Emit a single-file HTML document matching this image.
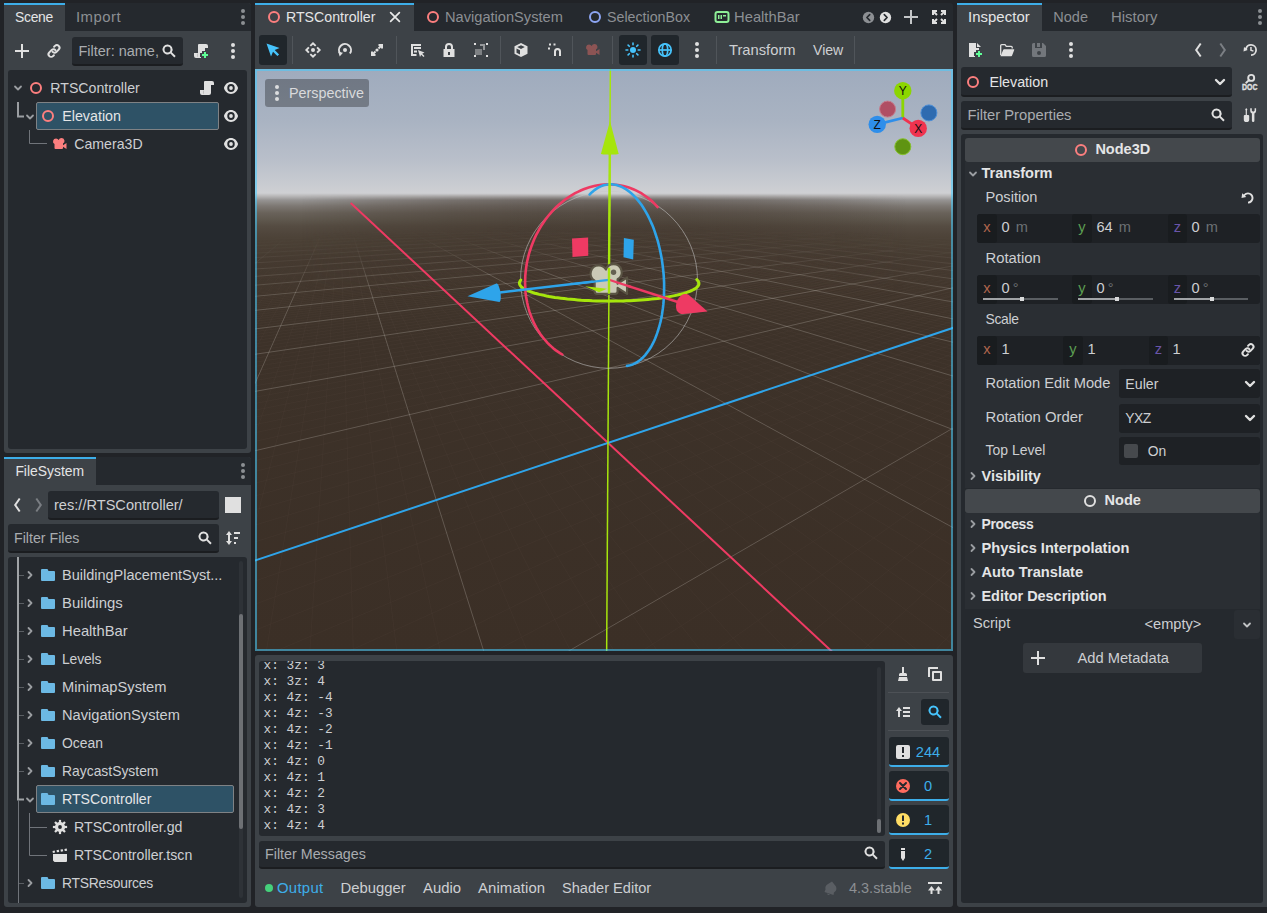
<!DOCTYPE html>
<html><head><meta charset="utf-8"><title>Godot</title>
<style>
:root{--bg:#212327;--base:#3d4247;--d1:#25292e;--d2:#1d2023;--d3:#181a1c;--fg:#cdcfd2;--fgb:#e4e5e6;--dim:#8c8f93;--acc:#3daee9;--sel:#2e5266;--ico:#e0e0e0}
*{box-sizing:border-box;margin:0;padding:0}
html,body{width:1267px;height:913px;overflow:hidden;background:var(--bg)}
body{font-family:"Liberation Sans",sans-serif;font-size:14.6px;color:var(--fg);position:relative}
.a{position:absolute}
.t{position:absolute;white-space:nowrap;line-height:20px;height:20px}
.dock{position:absolute;background:var(--base);border-radius:3px}
.tabbar{position:absolute;left:0;top:0;right:0;height:28px;background:var(--d1);border-radius:3px 3px 0 0}
.tab{position:absolute;top:0;height:28px;background:var(--base);border-top:2px solid var(--acc);color:var(--fgb)}
.dim{color:var(--dim)}
.field{position:absolute;background:var(--d1);border-radius:3px;border-bottom:2px solid #1b1d20}
.tree{position:absolute;background:var(--d1);border-radius:3px}
.selrow{position:absolute;background:var(--sel);border:1px solid #7f8285;border-radius:2px}
svg{position:absolute;overflow:visible}
.ic{width:16px;height:16px}
.b{font-weight:bold;color:var(--fgb)}
.sep{position:absolute;width:1px;background:#50555a}
.btnon{position:absolute;background:#20262b;border-radius:3px}
.mono{font-family:"Liberation Mono",monospace}
</style></head><body>
<div class="dock" style="left:4px;top:3px;width:247px;height:449.5px;"></div>
<div class="a" style="left:4px;top:3px;width:247px;height:28px;background:var(--d1);border-radius:3px 3px 0 0"></div>
<div class="tab" style="left:4px;top:3px;width:61px;height:28px;"></div>
<div class="t " style="left:15px;top:7.00px;font-size:13.90px;letter-spacing:-0.282px;color:var(--fgb)">Scene</div>
<div class="t dim" style="left:76px;top:7.00px;font-size:14.90px;letter-spacing:0.480px;">Import</div>
<svg class="ic" style="left:235.0px;top:9.0px;width:16px;height:16px" viewBox="0 0 16 16"><circle cx="8" cy="2" r="2" fill="#8c8f93"/><circle cx="8" cy="8" r="2" fill="#8c8f93"/><circle cx="8" cy="14" r="2" fill="#8c8f93"/></svg>
<svg class="ic" style="left:14.0px;top:43.0px;width:16px;height:16px" viewBox="0 0 16 16"><path d="M7 1v6H1v2h6v6h2V9h6V7H9V1z" fill="#e0e0e0"/></svg>
<svg class="ic" style="left:46.0px;top:43.0px;width:16px;height:16px" viewBox="0 0 16 16"><g fill="none" stroke="#e0e0e0" stroke-width="2" stroke-linecap="round"><path d="M6.6 8.9a2.6 2.6 0 0 0 3.7.1l2.4-2.4a2.6 2.6 0 0 0-3.7-3.7l-.9.9"/><path d="M9.4 7.1a2.6 2.6 0 0 0-3.7-.1l-2.4 2.4a2.6 2.6 0 0 0 3.7 3.7l.9-.9"/></g></svg>
<div class="field" style="left:72px;top:37px;width:111px;height:28.5px;"></div>
<div class="t " style="left:78.5px;top:41.00px;font-size:14.47px;letter-spacing:0.000px;color:#a9acb0">Filter: name,</div>
<svg class="ic" style="left:160.5px;top:43.0px;width:16px;height:16px" viewBox="0 0 16 16"><path d="M6.5 1.5a5 5 0 1 0 2.9 9.1l3.9 3.9 1.4-1.4-3.9-3.9A5 5 0 0 0 6.5 1.5zm0 2a3 3 0 0 1 0 6 3 3 0 0 1 0-6z" fill="#e0e0e0"/></svg>
<svg class="ic" style="left:193.0px;top:43.0px;width:16px;height:16px" viewBox="0 0 16 16"><path d="M6 1a1 1 0 0 0-1 1v8H1v3a2 2 0 0 0 2 2h5v-1H7v-4h2V8h3V5h3V3a2 2 0 0 0-2-2z" fill="#e0e0e0"/><path d="M4 10.500h.800V13a1.800 1.800 0 0 1-.800 1.500z" fill="#000" fill-opacity=".18"/><path d="M13 13h2v-2h-2V9h-2v2H9v2h2v2h2z" fill="#5fff97"/></svg>
<svg class="ic" style="left:225.0px;top:43.0px;width:16px;height:16px" viewBox="0 0 16 16"><circle cx="8" cy="2" r="2" fill="#e0e0e0"/><circle cx="8" cy="8" r="2" fill="#e0e0e0"/><circle cx="8" cy="14" r="2" fill="#e0e0e0"/></svg>
<div class="tree" style="left:8px;top:70px;width:239px;height:379px;"></div>
<svg class="ic" style="left:12.0px;top:82.0px;width:12px;height:12px" viewBox="0 0 16 16"><path d="M4 6l4 4 4-4" fill="none" stroke="#9a9da1" stroke-width="2.400" stroke-linecap="round" stroke-linejoin="round"/></svg>
<svg class="ic" style="left:28.0px;top:80.0px;width:16px;height:16px" viewBox="0 0 16 16"><circle cx="8" cy="8" r="5" fill="none" stroke="#fc7f7f" stroke-width="2"/></svg>
<div class="t " style="left:50.3px;top:78.00px;font-size:14.17px;letter-spacing:0.000px;">RTSController</div>
<svg class="ic" style="left:199.0px;top:80.0px;width:16px;height:16px" viewBox="0 0 16 16"><path d="M6 1a1 1 0 0 0-1 1v8H1v3a2 2 0 0 0 2 2h7a2 2 0 0 0 2-2V5h3V3a2 2 0 0 0-2-2z" fill="#e0e0e0"/><path d="M4 10.500h.800V13a1.800 1.800 0 0 1-.800 1.500z" fill="#000" fill-opacity=".18"/></svg>
<svg class="ic" style="left:223.0px;top:80.0px;width:16px;height:16px" viewBox="0 0 16 16"><path d="M8 2C4.443 2 1.53 4.42.5 7.7a1 1 0 0 0 0 .6C1.53 11.58 4.443 14 8 14s6.47-2.42 7.5-5.7a1 1 0 0 0 0-.6C14.47 4.42 11.557 2 8 2zm0 2a4 4 0 0 1 0 8 4 4 0 0 1 0-8zm0 2a2 2 0 0 0 0 4 2 2 0 0 0 0-4z" fill="#e0e0e0" transform="translate(8 8) scale(.930 1) translate(-8 -8)"/></svg>
<div class="selrow" style="left:36px;top:102px;width:183px;height:28px;"></div>
<svg style="left:0;top:0;width:260px;height:200px" viewBox="0 0 260 200"><path d="M18 102V116.500H24" fill="none" stroke="#9a9da1" stroke-width="2"/><path d="M29.5 130V143.5H47" fill="none" stroke="#70747a" stroke-width="1"/></svg>
<svg class="ic" style="left:24.0px;top:111.0px;width:12px;height:12px" viewBox="0 0 16 16"><path d="M4 6l4 4 4-4" fill="none" stroke="#9a9da1" stroke-width="2.400" stroke-linecap="round" stroke-linejoin="round"/></svg>
<svg class="ic" style="left:40.0px;top:108.0px;width:16px;height:16px" viewBox="0 0 16 16"><circle cx="8" cy="8" r="5" fill="none" stroke="#fc7f7f" stroke-width="2"/></svg>
<div class="t " style="left:62.2px;top:106.00px;font-size:14.29px;letter-spacing:0.000px;color:var(--fgb)">Elevation</div>
<svg class="ic" style="left:223.0px;top:108.0px;width:16px;height:16px" viewBox="0 0 16 16"><path d="M8 2C4.443 2 1.53 4.42.5 7.7a1 1 0 0 0 0 .6C1.53 11.58 4.443 14 8 14s6.47-2.42 7.5-5.7a1 1 0 0 0 0-.6C14.47 4.42 11.557 2 8 2zm0 2a4 4 0 0 1 0 8 4 4 0 0 1 0-8zm0 2a2 2 0 0 0 0 4 2 2 0 0 0 0-4z" fill="#e0e0e0" transform="translate(8 8) scale(.930 1) translate(-8 -8)"/></svg>
<svg class="ic" style="left:51.5px;top:136.0px;width:16px;height:16px" viewBox="0 0 16 16"><path d="M9.5 2a3 3 0 0 0-2.83 2A3 3 0 0 0 4 2.5 3 3 0 0 0 2.5 8.1V12a1 1 0 0 0 1 1h6.5a1 1 0 0 0 1-1v-1.2L14.5 13V7l-3.5 2.2V7.6A3 3 0 0 0 9.5 2z" fill="#fc7f7f"/></svg>
<div class="t " style="left:74.3px;top:134.00px;font-size:14.13px;letter-spacing:0.000px;">Camera3D</div>
<svg class="ic" style="left:223.0px;top:136.0px;width:16px;height:16px" viewBox="0 0 16 16"><path d="M8 2C4.443 2 1.53 4.42.5 7.7a1 1 0 0 0 0 .6C1.53 11.58 4.443 14 8 14s6.47-2.42 7.5-5.7a1 1 0 0 0 0-.6C14.47 4.42 11.557 2 8 2zm0 2a4 4 0 0 1 0 8 4 4 0 0 1 0-8zm0 2a2 2 0 0 0 0 4 2 2 0 0 0 0-4z" fill="#e0e0e0" transform="translate(8 8) scale(.930 1) translate(-8 -8)"/></svg>
<div class="dock" style="left:4px;top:457px;width:247px;height:450px;"></div>
<div class="a" style="left:4px;top:457px;width:247px;height:28px;background:var(--d1);border-radius:3px 3px 0 0"></div>
<div class="tab" style="left:4px;top:457px;width:92px;height:28px;"></div>
<div class="t " style="left:15.4px;top:461.00px;font-size:13.90px;letter-spacing:-0.004px;color:var(--fgb)">FileSystem</div>
<svg class="ic" style="left:235.0px;top:463.0px;width:16px;height:16px" viewBox="0 0 16 16"><circle cx="8" cy="2" r="2" fill="#8c8f93"/><circle cx="8" cy="8" r="2" fill="#8c8f93"/><circle cx="8" cy="14" r="2" fill="#8c8f93"/></svg>
<svg class="ic" style="left:9.5px;top:497.0px;width:16px;height:16px" viewBox="0 0 16 16"><path d="M9.700 1.500 5.200 8l4.500 6.500" fill="none" stroke="#e0e0e0" stroke-width="2" stroke-linejoin="miter"/></svg>
<svg class="ic" style="left:29.5px;top:497.0px;width:16px;height:16px" viewBox="0 0 16 16"><path d="M6.300 1.500 10.800 8l-4.500 6.500" fill="none" stroke="#7a7e83" stroke-width="2" stroke-linejoin="miter"/></svg>
<div class="field" style="left:48px;top:491px;width:171px;height:29px;"></div>
<div class="t " style="left:54px;top:495.00px;font-size:14.60px;letter-spacing:0.000px;">res://RTSController/</div>
<div class="a" style="left:225px;top:497px;width:16px;height:16px;background:#e0e0e0"></div>
<div class="field" style="left:8px;top:524px;width:211px;height:29px;"></div>
<div class="t " style="left:14px;top:528.00px;font-size:14.20px;letter-spacing:0.000px;color:#a9acb0">Filter Files</div>
<svg class="ic" style="left:196.5px;top:530.0px;width:16px;height:16px" viewBox="0 0 16 16"><path d="M6.5 1.5a5 5 0 1 0 2.9 9.1l3.9 3.9 1.4-1.4-3.9-3.9A5 5 0 0 0 6.5 1.5zm0 2a3 3 0 0 1 0 6 3 3 0 0 1 0-6z" fill="#e0e0e0"/></svg>
<svg class="ic" style="left:225.0px;top:530.0px;width:16px;height:16px" viewBox="0 0 16 16"><path d="M4 1 1 5h2v6H1l3 4 3-4H5V5h2zM9 2v2h6V2zM9 7v2h4V7zM9 12v2h2v-2z" fill="#e0e0e0"/></svg>
<div class="tree" style="left:8px;top:557px;width:239px;height:346px;"></div>
<div class="a" style="left:239px;top:561px;width:4px;height:337px;background:#2e3237;border-radius:2px"></div>
<div class="a" style="left:239px;top:614px;width:4px;height:215px;background:#6d7074;border-radius:2px"></div>
<div class="selrow" style="left:36px;top:785px;width:198px;height:28px;"></div>
<svg style="left:0;top:557px;width:260px;height:346px" viewBox="0 557 260 346"><path d="M18 557V799.5H24" fill="none" stroke="#a0a3a6" stroke-width="2"/><path d="M18.5 800V903" fill="none" stroke="#70747a" stroke-width="1"/><path d="M29.5 813V855.5H47M29.5 827.5H47" fill="none" stroke="#70747a" stroke-width="1"/><path d="M19 575.5H24" stroke="#5a5e63" stroke-width="1"/><path d="M19 603.5H24" stroke="#5a5e63" stroke-width="1"/><path d="M19 631.5H24" stroke="#5a5e63" stroke-width="1"/><path d="M19 659.5H24" stroke="#5a5e63" stroke-width="1"/><path d="M19 687.5H24" stroke="#5a5e63" stroke-width="1"/><path d="M19 715.5H24" stroke="#5a5e63" stroke-width="1"/><path d="M19 743.5H24" stroke="#5a5e63" stroke-width="1"/><path d="M19 771.5H24" stroke="#5a5e63" stroke-width="1"/><path d="M19 883.5H24" stroke="#5a5e63" stroke-width="1"/></svg>
<svg class="ic" style="left:24.0px;top:569.0px;width:12px;height:12px" viewBox="0 0 16 16"><path d="M6 4l4 4-4 4" fill="none" stroke="#9a9da1" stroke-width="2.400" stroke-linecap="round" stroke-linejoin="round"/></svg>
<svg class="ic" style="left:40.0px;top:567.0px;width:16px;height:16px" viewBox="0 0 16 16"><path d="M2 2a1 1 0 0 0-1 1v10a1 1 0 0 0 1 1h12a1 1 0 0 0 1-1V5a1 1 0 0 0-1-1H9a1 1 0 0 1-1-1 1 1 0 0 0-1-1z" fill="#6cb9e4"/></svg>
<div class="t " style="left:62px;top:565.00px;font-size:14.51px;letter-spacing:0.000px;">BuildingPlacementSyst...</div>
<svg class="ic" style="left:24.0px;top:597.0px;width:12px;height:12px" viewBox="0 0 16 16"><path d="M6 4l4 4-4 4" fill="none" stroke="#9a9da1" stroke-width="2.400" stroke-linecap="round" stroke-linejoin="round"/></svg>
<svg class="ic" style="left:40.0px;top:595.0px;width:16px;height:16px" viewBox="0 0 16 16"><path d="M2 2a1 1 0 0 0-1 1v10a1 1 0 0 0 1 1h12a1 1 0 0 0 1-1V5a1 1 0 0 0-1-1H9a1 1 0 0 1-1-1 1 1 0 0 0-1-1z" fill="#6cb9e4"/></svg>
<div class="t " style="left:62px;top:593.00px;font-size:14.90px;letter-spacing:0.037px;">Buildings</div>
<svg class="ic" style="left:24.0px;top:625.0px;width:12px;height:12px" viewBox="0 0 16 16"><path d="M6 4l4 4-4 4" fill="none" stroke="#9a9da1" stroke-width="2.400" stroke-linecap="round" stroke-linejoin="round"/></svg>
<svg class="ic" style="left:40.0px;top:623.0px;width:16px;height:16px" viewBox="0 0 16 16"><path d="M2 2a1 1 0 0 0-1 1v10a1 1 0 0 0 1 1h12a1 1 0 0 0 1-1V5a1 1 0 0 0-1-1H9a1 1 0 0 1-1-1 1 1 0 0 0-1-1z" fill="#6cb9e4"/></svg>
<div class="t " style="left:62px;top:621.00px;font-size:14.78px;letter-spacing:0.000px;">HealthBar</div>
<svg class="ic" style="left:24.0px;top:653.0px;width:12px;height:12px" viewBox="0 0 16 16"><path d="M6 4l4 4-4 4" fill="none" stroke="#9a9da1" stroke-width="2.400" stroke-linecap="round" stroke-linejoin="round"/></svg>
<svg class="ic" style="left:40.0px;top:651.0px;width:16px;height:16px" viewBox="0 0 16 16"><path d="M2 2a1 1 0 0 0-1 1v10a1 1 0 0 0 1 1h12a1 1 0 0 0 1-1V5a1 1 0 0 0-1-1H9a1 1 0 0 1-1-1 1 1 0 0 0-1-1z" fill="#6cb9e4"/></svg>
<div class="t " style="left:62px;top:649.00px;font-size:13.90px;letter-spacing:-0.130px;">Levels</div>
<svg class="ic" style="left:24.0px;top:681.0px;width:12px;height:12px" viewBox="0 0 16 16"><path d="M6 4l4 4-4 4" fill="none" stroke="#9a9da1" stroke-width="2.400" stroke-linecap="round" stroke-linejoin="round"/></svg>
<svg class="ic" style="left:40.0px;top:679.0px;width:16px;height:16px" viewBox="0 0 16 16"><path d="M2 2a1 1 0 0 0-1 1v10a1 1 0 0 0 1 1h12a1 1 0 0 0 1-1V5a1 1 0 0 0-1-1H9a1 1 0 0 1-1-1 1 1 0 0 0-1-1z" fill="#6cb9e4"/></svg>
<div class="t " style="left:62px;top:677.00px;font-size:14.69px;letter-spacing:0.000px;">MinimapSystem</div>
<svg class="ic" style="left:24.0px;top:709.0px;width:12px;height:12px" viewBox="0 0 16 16"><path d="M6 4l4 4-4 4" fill="none" stroke="#9a9da1" stroke-width="2.400" stroke-linecap="round" stroke-linejoin="round"/></svg>
<svg class="ic" style="left:40.0px;top:707.0px;width:16px;height:16px" viewBox="0 0 16 16"><path d="M2 2a1 1 0 0 0-1 1v10a1 1 0 0 0 1 1h12a1 1 0 0 0 1-1V5a1 1 0 0 0-1-1H9a1 1 0 0 1-1-1 1 1 0 0 0-1-1z" fill="#6cb9e4"/></svg>
<div class="t " style="left:62px;top:705.00px;font-size:14.64px;letter-spacing:0.000px;">NavigationSystem</div>
<svg class="ic" style="left:24.0px;top:737.0px;width:12px;height:12px" viewBox="0 0 16 16"><path d="M6 4l4 4-4 4" fill="none" stroke="#9a9da1" stroke-width="2.400" stroke-linecap="round" stroke-linejoin="round"/></svg>
<svg class="ic" style="left:40.0px;top:735.0px;width:16px;height:16px" viewBox="0 0 16 16"><path d="M2 2a1 1 0 0 0-1 1v10a1 1 0 0 0 1 1h12a1 1 0 0 0 1-1V5a1 1 0 0 0-1-1H9a1 1 0 0 1-1-1 1 1 0 0 0-1-1z" fill="#6cb9e4"/></svg>
<div class="t " style="left:62px;top:733.00px;font-size:13.92px;letter-spacing:0.000px;">Ocean</div>
<svg class="ic" style="left:24.0px;top:765.0px;width:12px;height:12px" viewBox="0 0 16 16"><path d="M6 4l4 4-4 4" fill="none" stroke="#9a9da1" stroke-width="2.400" stroke-linecap="round" stroke-linejoin="round"/></svg>
<svg class="ic" style="left:40.0px;top:763.0px;width:16px;height:16px" viewBox="0 0 16 16"><path d="M2 2a1 1 0 0 0-1 1v10a1 1 0 0 0 1 1h12a1 1 0 0 0 1-1V5a1 1 0 0 0-1-1H9a1 1 0 0 1-1-1 1 1 0 0 0-1-1z" fill="#6cb9e4"/></svg>
<div class="t " style="left:62px;top:761.00px;font-size:13.90px;letter-spacing:-0.004px;">RaycastSystem</div>
<svg class="ic" style="left:24.0px;top:794.0px;width:12px;height:12px" viewBox="0 0 16 16"><path d="M4 6l4 4 4-4" fill="none" stroke="#9a9da1" stroke-width="2.400" stroke-linecap="round" stroke-linejoin="round"/></svg>
<svg class="ic" style="left:40.0px;top:791.0px;width:16px;height:16px" viewBox="0 0 16 16"><path d="M2 2a1 1 0 0 0-1 1v10a1 1 0 0 0 1 1h12a1 1 0 0 0 1-1V5a1 1 0 0 0-1-1H9a1 1 0 0 1-1-1 1 1 0 0 0-1-1z" fill="#6cb9e4"/></svg>
<div class="t " style="left:62px;top:789.00px;font-size:14.17px;letter-spacing:0.000px;color:var(--fgb)">RTSController</div>
<svg class="ic" style="left:52.0px;top:819.0px;width:16px;height:16px" viewBox="0 0 16 16"><path fill-rule="evenodd" d="M8 2.900a5.100 5.100 0 1 0 0 10.200a5.100 5.100 0 1 0 0-10.200zM8 6.100a1.900 1.900 0 1 1 0 3.800a1.900 1.900 0 1 1 0-3.800z" fill="#e0e0e0"/><rect x="6.900" y=".900" width="2.200" height="3" transform="rotate(0 8 8)" fill="#e0e0e0"/><rect x="6.900" y=".900" width="2.200" height="3" transform="rotate(45 8 8)" fill="#e0e0e0"/><rect x="6.900" y=".900" width="2.200" height="3" transform="rotate(90 8 8)" fill="#e0e0e0"/><rect x="6.900" y=".900" width="2.200" height="3" transform="rotate(135 8 8)" fill="#e0e0e0"/><rect x="6.900" y=".900" width="2.200" height="3" transform="rotate(180 8 8)" fill="#e0e0e0"/><rect x="6.900" y=".900" width="2.200" height="3" transform="rotate(225 8 8)" fill="#e0e0e0"/><rect x="6.900" y=".900" width="2.200" height="3" transform="rotate(270 8 8)" fill="#e0e0e0"/><rect x="6.900" y=".900" width="2.200" height="3" transform="rotate(315 8 8)" fill="#e0e0e0"/></svg>
<div class="t " style="left:74px;top:817.00px;font-size:14.18px;letter-spacing:0.000px;">RTSController.gd</div>
<svg class="ic" style="left:52.0px;top:847.0px;width:16px;height:16px" viewBox="0 0 16 16"><path d="M1 7h14v7a1 1 0 0 1-1 1H2.500L1 13.500z" fill="#e0e0e0"/><path d="M.5 3.900l2.200-.400.400 2.100-2.200.400zM4.500 3.200l2.300-.400.400 2.100-2.300.400zM8.500 2.600l2.300-.400.400 2.100-2.300.400zM12.400 2l2.300-.400.400 2.100-2.300.400z" fill="#e0e0e0"/></svg>
<div class="t " style="left:74px;top:845.00px;font-size:14.13px;letter-spacing:0.000px;">RTSController.tscn</div>
<svg class="ic" style="left:24.0px;top:877.0px;width:12px;height:12px" viewBox="0 0 16 16"><path d="M6 4l4 4-4 4" fill="none" stroke="#9a9da1" stroke-width="2.400" stroke-linecap="round" stroke-linejoin="round"/></svg>
<svg class="ic" style="left:40.0px;top:875.0px;width:16px;height:16px" viewBox="0 0 16 16"><path d="M2 2a1 1 0 0 0-1 1v10a1 1 0 0 0 1 1h12a1 1 0 0 0 1-1V5a1 1 0 0 0-1-1H9a1 1 0 0 1-1-1 1 1 0 0 0-1-1z" fill="#6cb9e4"/></svg>
<div class="t " style="left:62px;top:873.00px;font-size:13.90px;letter-spacing:-0.257px;">RTSResources</div>
<div class="a" style="left:255px;top:3px;width:698px;height:28px;background:var(--d1);border-radius:3px 3px 0 0"></div>
<div class="tab" style="left:255px;top:3px;width:158.5px;height:28px;"></div>
<svg class="ic" style="left:266.0px;top:9.0px;width:16px;height:16px" viewBox="0 0 16 16"><circle cx="8" cy="8" r="5" fill="none" stroke="#fc7f7f" stroke-width="2"/></svg>
<div class="t " style="left:286px;top:7.00px;font-size:14.17px;letter-spacing:0.000px;color:var(--fgb)">RTSController</div>
<svg class="ic" style="left:388.0px;top:10.0px;width:14px;height:14px" viewBox="0 0 16 16"><path d="M3 3l10 10M13 3 3 13" fill="none" stroke="#e8e8e8" stroke-width="2" stroke-linecap="round"/></svg>
<svg class="ic" style="left:425.0px;top:9.0px;width:16px;height:16px" viewBox="0 0 16 16"><circle cx="8" cy="8" r="5" fill="none" stroke="#fc7f7f" stroke-width="2"/></svg>
<div class="t dim" style="left:445px;top:7.00px;font-size:14.64px;letter-spacing:0.000px;">NavigationSystem</div>
<svg class="ic" style="left:587.0px;top:9.0px;width:16px;height:16px" viewBox="0 0 16 16"><circle cx="8" cy="8" r="5" fill="none" stroke="#8da5f3" stroke-width="2"/></svg>
<div class="t dim" style="left:607px;top:7.00px;font-size:14.22px;letter-spacing:0.000px;">SelectionBox</div>
<svg class="ic" style="left:714.0px;top:9.0px;width:16px;height:16px" viewBox="0 0 16 16"><rect x="1.500" y="3" width="13" height="10" rx="2" fill="none" stroke="#8eef97" stroke-width="2"/><path d="M4 6h1.500v4H4zM6.500 6H8v4H6.500zM9 6h3v1.500H9z" fill="#8eef97"/></svg>
<div class="t dim" style="left:734px;top:7.00px;font-size:14.78px;letter-spacing:0.000px;">HealthBar</div>
<svg class="ic" style="left:861.5px;top:10.5px;width:13px;height:13px" viewBox="0 0 16 16"><circle cx="8" cy="8" r="7" fill="#8c8f93"/><path d="M9.500 4.500 6 8l3.500 3.500" fill="none" stroke="#25292e" stroke-width="2" stroke-linecap="round" stroke-linejoin="round"/></svg>
<svg class="ic" style="left:878.5px;top:10.5px;width:13px;height:13px" viewBox="0 0 16 16"><circle cx="8" cy="8" r="7" fill="#e0e0e0"/><path d="M6.500 4.500 10 8l-3.500 3.500" fill="none" stroke="#25292e" stroke-width="2" stroke-linecap="round" stroke-linejoin="round"/></svg>
<svg class="ic" style="left:903.0px;top:9.0px;width:16px;height:16px" viewBox="0 0 16 16"><path d="M7 1v6H1v2h6v6h2V9h6V7H9V1z" fill="#c4c6c8"/></svg>
<svg class="ic" style="left:931.0px;top:9.0px;width:16px;height:16px" viewBox="0 0 16 16"><path d="M1 1h5v2H4.400l2.300 2.300-1.400 1.400L3 4.400V6H1zM15 1v5h-2V4.400l-2.300 2.300-1.400-1.400L11.600 3H10V1zM1 15v-5h2v1.600l2.300-2.300 1.400 1.400L4.400 13H6v2zM15 15h-5v-2h1.600l-2.300-2.300 1.400-1.400 2.300 2.300V10h2z" fill="#e0e0e0"/></svg>
<div class="a" style="left:255px;top:31px;width:698px;height:620px;background:var(--base)"></div>
<div class="btnon" style="left:259px;top:35px;width:28px;height:30px;"></div>
<svg class="ic" style="left:265.0px;top:42.0px;width:16px;height:16px" viewBox="0 0 16 16"><path d="M1.5 1.5 6 14.6l2-4.9 4.4 4.4 1.7-1.7-4.4-4.4 4.9-2z" fill="#46c3fb"/></svg>
<div class="sep" style="left:292px;top:36px;width:1px;height:28px;"></div>
<svg class="ic" style="left:305.0px;top:42.0px;width:16px;height:16px" viewBox="0 0 16 16"><path d="M5.300 3.900 8 1.300l2.700 2.600M5.300 12.100 8 14.700l2.700-2.600M3.900 5.300 1.300 8l2.600 2.700M12.100 5.300 14.700 8l-2.600 2.700" fill="none" stroke="#e0e0e0" stroke-width="1.900" stroke-linejoin="miter"/><circle cx="8" cy="8" r="2" fill="#e0e0e0"/></svg>
<svg class="ic" style="left:337.0px;top:42.0px;width:16px;height:16px" viewBox="0 0 16 16"><path d="M3.400 11.900A6 6 0 1 1 12.900 11.500" fill="none" stroke="#e0e0e0" stroke-width="2"/><path d="M1.200 9.700 6 10.800 2.700 14.400z" fill="#e0e0e0"/><circle cx="8" cy="8" r="2" fill="#e0e0e0"/></svg>
<svg class="ic" style="left:369.0px;top:42.0px;width:16px;height:16px" viewBox="0 0 16 16"><path d="M9.500 2H14v4.500h-2V5.400L10.200 7.200 8.800 5.800 10.600 4H9.500zM6.500 14H2V9.500h2v1.100l1.800-1.800 1.400 1.400L5.400 12h1.100z" fill="#e0e0e0"/><circle cx="8" cy="8" r="1.600" fill="#e0e0e0"/></svg>
<div class="sep" style="left:396px;top:36px;width:1px;height:28px;"></div>
<svg class="ic" style="left:409.0px;top:42.0px;width:16px;height:16px" viewBox="0 0 16 16"><path d="M2 2v12h5.5v-2H4V4h8V2zm3 3v2h7V5zm0 3.5v2h3v-2zM9 8l2 7 1.2-2.3 2.3 2.3 1-1-2.3-2.3L15.5 10.5z" fill="#e0e0e0"/></svg>
<svg class="ic" style="left:441.0px;top:42.0px;width:16px;height:16px" viewBox="0 0 16 16"><path d="M8 1a4 4 0 0 0-4 4v2H2.5v8h11V7H12V5a4 4 0 0 0-4-4zm0 2a2 2 0 0 1 2 2v2H6V5a2 2 0 0 1 2-2zM7 10h2v3H7z" fill="#e0e0e0"/></svg>
<svg class="ic" style="left:473.0px;top:42.0px;width:16px;height:16px" viewBox="0 0 16 16"><path d="M1 1h2v2H1zM13 1h2v2h-2zM1 13h2v2H1zM13 13h2v2h-2z" fill="#e0e0e0"/><path d="M7 2h5v6h-2V4H7z" fill="#e0e0e0" fill-opacity=".55"/><path d="M2 7h7v6H2z" fill="#e0e0e0" fill-opacity=".4"/></svg>
<div class="sep" style="left:500px;top:36px;width:1px;height:28px;"></div>
<svg class="ic" style="left:513.0px;top:42.0px;width:16px;height:16px" viewBox="0 0 16 16"><path d="M8 1 1.5 4.2v7.6L8 15l6.5-3.2V4.200zM8 3.200 11.800 5 8 6.900 4.200 5zM3.500 6.500 7 8.300v4.200l-3.500-1.800z" fill="#e0e0e0"/></svg>
<svg class="ic" style="left:545.5px;top:42.0px;width:16px;height:16px" viewBox="0 0 16 16"><path d="M3 1.500h2v2H3zM7.500 1.500h2v2h-2zM2 5.500h2v2H2zM8 14V9.500a3.500 3.500 0 0 1 7 0V14h-2V9.500a1.500 1.500 0 0 0-3 0V14z" fill="#e0e0e0"/></svg>
<div class="sep" style="left:572px;top:36px;width:1px;height:28px;"></div>
<svg class="ic" style="left:585.0px;top:42.0px;width:16px;height:16px" viewBox="0 0 16 16"><path d="M9.5 2a3 3 0 0 0-2.83 2A3 3 0 0 0 4 2.5 3 3 0 0 0 2.5 8.1V12a1 1 0 0 0 1 1h6.5a1 1 0 0 0 1-1v-1.2L14.5 13V7l-3.5 2.2V7.6A3 3 0 0 0 9.5 2z" fill="#8c5454"/></svg>
<div class="sep" style="left:612px;top:36px;width:1px;height:28px;"></div>
<div class="btnon" style="left:619px;top:35px;width:28px;height:30px;"></div>
<svg class="ic" style="left:625.0px;top:42.0px;width:16px;height:16px" viewBox="0 0 16 16"><circle cx="8" cy="8" r="3" fill="#46c3fb"/><g stroke="#46c3fb" stroke-width="1.600" stroke-linecap="round"><path d="M8 1v1.800M8 13.200V15M1 8h1.800M13.200 8H15M3.100 3.100l1.200 1.200M11.700 11.700l1.200 1.200M3.100 12.900l1.200-1.200M11.700 4.300l1.200-1.200"/></g></svg>
<div class="btnon" style="left:651px;top:35px;width:28px;height:30px;"></div>
<svg class="ic" style="left:657.0px;top:42.0px;width:16px;height:16px" viewBox="0 0 16 16"><g fill="none" stroke="#46c3fb" stroke-width="1.700"><circle cx="8" cy="8" r="6.200"/><ellipse cx="8" cy="8" rx="2.700" ry="6.200"/><path d="M2 8h12"/></g></svg>
<svg class="ic" style="left:689.0px;top:42.0px;width:16px;height:16px" viewBox="0 0 16 16"><circle cx="8" cy="2" r="2" fill="#e0e0e0"/><circle cx="8" cy="8" r="2" fill="#e0e0e0"/><circle cx="8" cy="14" r="2" fill="#e0e0e0"/></svg>
<div class="sep" style="left:716px;top:36px;width:1px;height:28px;"></div>
<div class="t " style="left:729px;top:40.00px;font-size:14.74px;letter-spacing:0.000px;">Transform</div>
<div class="t " style="left:813px;top:40.00px;font-size:14.10px;letter-spacing:0.000px;">View</div>
<div class="sep" style="left:854px;top:36px;width:1px;height:28px;"></div>
<div class="a" style="left:255px;top:69px;width:698px;height:582px;overflow:hidden">
<svg style="left:0;top:0;width:698px;height:582px" viewBox="0 0 698 582"><defs><linearGradient id="sky" x1="0" y1="0" x2="0" y2="1"><stop offset="0.0000" stop-color="#9fabbd"/><stop offset="0.0876" stop-color="#a9b3c2"/><stop offset="0.1564" stop-color="#b9bfca"/><stop offset="0.1993" stop-color="#c9ccd1"/><stop offset="0.2131" stop-color="#cfd0d3"/><stop offset="0.2182" stop-color="#b9b8b9"/><stop offset="0.2251" stop-color="#969493"/><stop offset="0.2354" stop-color="#7d7873"/><stop offset="0.2474" stop-color="#69625a"/><stop offset="0.2586" stop-color="#5f584e"/><stop offset="0.2698" stop-color="#554c42"/><stop offset="0.2811" stop-color="#50463c"/><stop offset="0.2938" stop-color="#4b4136"/><stop offset="0.3282" stop-color="#44392f"/><stop offset="0.3797" stop-color="#40352b"/><stop offset="0.4656" stop-color="#3d3229"/><stop offset="1.0000" stop-color="#3b2f26"/></linearGradient></defs><rect x="0" y="0" width="698" height="582" fill="url(#sky)"/><defs><linearGradient id="hg" x1="0" y1="0" x2="1" y2="0"><stop offset="0.0659" stop-color="#3c3027" stop-opacity="0.000"/><stop offset="0.1719" stop-color="#3c3027" stop-opacity="0.188"/><stop offset="0.2865" stop-color="#3c3027" stop-opacity="0.334"/><stop offset="0.4011" stop-color="#3c3027" stop-opacity="0.417"/><stop offset="0.5000" stop-color="#3c3027" stop-opacity="0.440"/><stop offset="0.5989" stop-color="#3c3027" stop-opacity="0.417"/><stop offset="0.7135" stop-color="#3c3027" stop-opacity="0.334"/><stop offset="0.8281" stop-color="#3c3027" stop-opacity="0.188"/><stop offset="0.9341" stop-color="#3c3027" stop-opacity="0.000"/></linearGradient><linearGradient id="hv" x1="0" y1="0" x2="0" y2="1"><stop offset="0" stop-color="#000"/><stop offset=".06" stop-color="#fff"/><stop offset=".4" stop-color="#fff"/><stop offset="1" stop-color="#000"/></linearGradient><mask id="hm" maskUnits="userSpaceOnUse" x="0" y="125" width="698" height="106"><rect x="0" y="125" width="698" height="106" fill="url(#hv)"/></mask></defs><rect x="0" y="125" width="698" height="106" fill="url(#hg)" mask="url(#hm)"/><defs><mask id="gm" maskUnits="userSpaceOnUse" x="0" y="0" width="698" height="582"><rect x="174" y="157" width="59" height="7" fill="rgb(1,1,1)"/><rect x="232" y="157" width="59" height="7" fill="rgb(3,3,3)"/><rect x="290" y="157" width="59" height="7" fill="rgb(4,4,4)"/><rect x="348" y="157" width="59" height="7" fill="rgb(4,4,4)"/><rect x="406" y="157" width="59" height="7" fill="rgb(3,3,3)"/><rect x="464" y="157" width="59" height="7" fill="rgb(1,1,1)"/><rect x="0" y="163" width="59" height="7" fill="rgb(1,1,1)"/><rect x="58" y="163" width="59" height="7" fill="rgb(4,4,4)"/><rect x="116" y="163" width="59" height="7" fill="rgb(9,9,9)"/><rect x="174" y="163" width="59" height="7" fill="rgb(15,15,15)"/><rect x="232" y="163" width="59" height="7" fill="rgb(20,20,20)"/><rect x="290" y="163" width="59" height="7" fill="rgb(22,22,22)"/><rect x="348" y="163" width="59" height="7" fill="rgb(22,22,22)"/><rect x="406" y="163" width="59" height="7" fill="rgb(20,20,20)"/><rect x="464" y="163" width="59" height="7" fill="rgb(15,15,15)"/><rect x="522" y="163" width="59" height="7" fill="rgb(10,10,10)"/><rect x="580" y="163" width="59" height="7" fill="rgb(4,4,4)"/><rect x="638" y="163" width="59" height="7" fill="rgb(1,1,1)"/><rect x="0" y="169" width="59" height="7" fill="rgb(11,11,11)"/><rect x="58" y="169" width="59" height="7" fill="rgb(20,20,20)"/><rect x="116" y="169" width="59" height="7" fill="rgb(27,27,27)"/><rect x="174" y="169" width="59" height="7" fill="rgb(35,35,35)"/><rect x="232" y="169" width="59" height="7" fill="rgb(41,41,41)"/><rect x="290" y="169" width="59" height="7" fill="rgb(44,44,44)"/><rect x="348" y="169" width="59" height="7" fill="rgb(44,44,44)"/><rect x="406" y="169" width="59" height="7" fill="rgb(41,41,41)"/><rect x="464" y="169" width="59" height="7" fill="rgb(35,35,35)"/><rect x="522" y="169" width="59" height="7" fill="rgb(28,28,28)"/><rect x="580" y="169" width="59" height="7" fill="rgb(20,20,20)"/><rect x="638" y="169" width="59" height="7" fill="rgb(12,12,12)"/><rect x="696" y="169" width="59" height="7" fill="rgb(5,5,5)"/><rect x="0" y="175" width="59" height="7" fill="rgb(27,27,27)"/><rect x="58" y="175" width="59" height="7" fill="rgb(38,38,38)"/><rect x="116" y="175" width="59" height="7" fill="rgb(49,49,49)"/><rect x="174" y="175" width="59" height="7" fill="rgb(60,60,60)"/><rect x="232" y="175" width="59" height="7" fill="rgb(69,69,69)"/><rect x="290" y="175" width="59" height="7" fill="rgb(74,74,74)"/><rect x="348" y="175" width="59" height="7" fill="rgb(74,74,74)"/><rect x="406" y="175" width="59" height="7" fill="rgb(69,69,69)"/><rect x="464" y="175" width="59" height="7" fill="rgb(61,61,61)"/><rect x="522" y="175" width="59" height="7" fill="rgb(50,50,50)"/><rect x="580" y="175" width="59" height="7" fill="rgb(38,38,38)"/><rect x="638" y="175" width="59" height="7" fill="rgb(28,28,28)"/><rect x="696" y="175" width="59" height="7" fill="rgb(19,19,19)"/><rect x="0" y="181" width="59" height="7" fill="rgb(47,47,47)"/><rect x="58" y="181" width="59" height="7" fill="rgb(61,61,61)"/><rect x="116" y="181" width="59" height="7" fill="rgb(77,77,77)"/><rect x="174" y="181" width="59" height="7" fill="rgb(91,91,91)"/><rect x="232" y="181" width="59" height="7" fill="rgb(103,103,103)"/><rect x="290" y="181" width="59" height="7" fill="rgb(110,110,110)"/><rect x="348" y="181" width="59" height="7" fill="rgb(110,110,110)"/><rect x="406" y="181" width="59" height="7" fill="rgb(104,104,104)"/><rect x="464" y="181" width="59" height="7" fill="rgb(92,92,92)"/><rect x="522" y="181" width="59" height="7" fill="rgb(78,78,78)"/><rect x="580" y="181" width="59" height="7" fill="rgb(62,62,62)"/><rect x="638" y="181" width="59" height="7" fill="rgb(47,47,47)"/><rect x="696" y="181" width="59" height="7" fill="rgb(35,35,35)"/><rect x="0" y="187" width="59" height="7" fill="rgb(70,70,70)"/><rect x="58" y="187" width="59" height="7" fill="rgb(89,89,89)"/><rect x="116" y="187" width="59" height="7" fill="rgb(109,109,109)"/><rect x="174" y="187" width="59" height="7" fill="rgb(127,127,127)"/><rect x="232" y="187" width="59" height="7" fill="rgb(141,141,141)"/><rect x="290" y="187" width="59" height="7" fill="rgb(148,148,148)"/><rect x="348" y="187" width="59" height="7" fill="rgb(148,148,148)"/><rect x="406" y="187" width="59" height="7" fill="rgb(141,141,141)"/><rect x="464" y="187" width="59" height="7" fill="rgb(128,128,128)"/><rect x="522" y="187" width="59" height="7" fill="rgb(110,110,110)"/><rect x="580" y="187" width="59" height="7" fill="rgb(90,90,90)"/><rect x="638" y="187" width="59" height="7" fill="rgb(71,71,71)"/><rect x="696" y="187" width="59" height="7" fill="rgb(54,54,54)"/><rect x="0" y="193" width="59" height="7" fill="rgb(98,98,98)"/><rect x="58" y="193" width="59" height="7" fill="rgb(121,121,121)"/><rect x="116" y="193" width="59" height="7" fill="rgb(144,144,144)"/><rect x="174" y="193" width="59" height="7" fill="rgb(163,163,163)"/><rect x="232" y="193" width="59" height="7" fill="rgb(178,178,178)"/><rect x="290" y="193" width="59" height="7" fill="rgb(186,186,186)"/><rect x="348" y="193" width="59" height="7" fill="rgb(186,186,186)"/><rect x="406" y="193" width="59" height="7" fill="rgb(179,179,179)"/><rect x="464" y="193" width="59" height="7" fill="rgb(164,164,164)"/><rect x="522" y="193" width="59" height="7" fill="rgb(145,145,145)"/><rect x="580" y="193" width="59" height="7" fill="rgb(122,122,122)"/><rect x="638" y="193" width="59" height="7" fill="rgb(99,99,99)"/><rect x="696" y="193" width="59" height="7" fill="rgb(78,78,78)"/><rect x="0" y="199" width="59" height="7" fill="rgb(128,128,128)"/><rect x="58" y="199" width="59" height="7" fill="rgb(154,154,154)"/><rect x="116" y="199" width="59" height="7" fill="rgb(178,178,178)"/><rect x="174" y="199" width="59" height="7" fill="rgb(198,198,198)"/><rect x="232" y="199" width="59" height="7" fill="rgb(212,212,212)"/><rect x="290" y="199" width="59" height="7" fill="rgb(219,219,219)"/><rect x="348" y="199" width="59" height="7" fill="rgb(219,219,219)"/><rect x="406" y="199" width="59" height="7" fill="rgb(213,213,213)"/><rect x="464" y="199" width="59" height="7" fill="rgb(199,199,199)"/><rect x="522" y="199" width="59" height="7" fill="rgb(179,179,179)"/><rect x="580" y="199" width="59" height="7" fill="rgb(155,155,155)"/><rect x="638" y="199" width="59" height="7" fill="rgb(129,129,129)"/><rect x="696" y="199" width="59" height="7" fill="rgb(104,104,104)"/><rect x="0" y="205" width="59" height="7" fill="rgb(159,159,159)"/><rect x="58" y="205" width="59" height="7" fill="rgb(186,186,186)"/><rect x="116" y="205" width="59" height="7" fill="rgb(210,210,210)"/><rect x="174" y="205" width="59" height="7" fill="rgb(227,227,227)"/><rect x="232" y="205" width="59" height="7" fill="rgb(239,239,239)"/><rect x="290" y="205" width="59" height="7" fill="rgb(244,244,244)"/><rect x="348" y="205" width="59" height="7" fill="rgb(244,244,244)"/><rect x="406" y="205" width="59" height="7" fill="rgb(239,239,239)"/><rect x="464" y="205" width="59" height="7" fill="rgb(228,228,228)"/><rect x="522" y="205" width="59" height="7" fill="rgb(211,211,211)"/><rect x="580" y="205" width="59" height="7" fill="rgb(187,187,187)"/><rect x="638" y="205" width="59" height="7" fill="rgb(160,160,160)"/><rect x="696" y="205" width="59" height="7" fill="rgb(133,133,133)"/><rect x="0" y="211" width="59" height="7" fill="rgb(189,189,189)"/><rect x="58" y="211" width="59" height="7" fill="rgb(215,215,215)"/><rect x="116" y="211" width="59" height="7" fill="rgb(235,235,235)"/><rect x="174" y="211" width="59" height="7" fill="rgb(248,248,248)"/><rect x="232" y="211" width="59" height="7" fill="rgb(253,253,253)"/><rect x="290" y="211" width="59" height="7" fill="rgb(255,255,255)"/><rect x="348" y="211" width="59" height="7" fill="rgb(255,255,255)"/><rect x="406" y="211" width="59" height="7" fill="rgb(253,253,253)"/><rect x="464" y="211" width="59" height="7" fill="rgb(248,248,248)"/><rect x="522" y="211" width="59" height="7" fill="rgb(236,236,236)"/><rect x="580" y="211" width="59" height="7" fill="rgb(216,216,216)"/><rect x="638" y="211" width="59" height="7" fill="rgb(190,190,190)"/><rect x="696" y="211" width="59" height="7" fill="rgb(162,162,162)"/><rect x="0" y="217" width="59" height="7" fill="rgb(215,215,215)"/><rect x="58" y="217" width="59" height="7" fill="rgb(237,237,237)"/><rect x="116" y="217" width="59" height="7" fill="rgb(251,251,251)"/><rect x="174" y="217" width="59" height="7" fill="rgb(255,255,255)"/><rect x="232" y="217" width="59" height="7" fill="rgb(255,255,255)"/><rect x="290" y="217" width="59" height="7" fill="rgb(255,255,255)"/><rect x="348" y="217" width="59" height="7" fill="rgb(255,255,255)"/><rect x="406" y="217" width="59" height="7" fill="rgb(255,255,255)"/><rect x="464" y="217" width="59" height="7" fill="rgb(255,255,255)"/><rect x="522" y="217" width="59" height="7" fill="rgb(251,251,251)"/><rect x="580" y="217" width="59" height="7" fill="rgb(238,238,238)"/><rect x="638" y="217" width="59" height="7" fill="rgb(217,217,217)"/><rect x="696" y="217" width="59" height="7" fill="rgb(189,189,189)"/><rect x="0" y="223" width="59" height="7" fill="rgb(237,237,237)"/><rect x="58" y="223" width="59" height="7" fill="rgb(251,251,251)"/><rect x="116" y="223" width="59" height="7" fill="rgb(255,255,255)"/><rect x="174" y="223" width="59" height="7" fill="rgb(255,255,255)"/><rect x="232" y="223" width="59" height="7" fill="rgb(255,255,255)"/><rect x="290" y="223" width="59" height="7" fill="rgb(255,255,255)"/><rect x="348" y="223" width="59" height="7" fill="rgb(255,255,255)"/><rect x="406" y="223" width="59" height="7" fill="rgb(255,255,255)"/><rect x="464" y="223" width="59" height="7" fill="rgb(255,255,255)"/><rect x="522" y="223" width="59" height="7" fill="rgb(255,255,255)"/><rect x="580" y="223" width="59" height="7" fill="rgb(252,252,252)"/><rect x="638" y="223" width="59" height="7" fill="rgb(238,238,238)"/><rect x="696" y="223" width="59" height="7" fill="rgb(214,214,214)"/><rect x="0" y="229" width="59" height="7" fill="rgb(251,251,251)"/><rect x="58" y="229" width="59" height="7" fill="rgb(255,255,255)"/><rect x="116" y="229" width="59" height="7" fill="rgb(255,255,255)"/><rect x="174" y="229" width="59" height="7" fill="rgb(255,255,255)"/><rect x="232" y="229" width="59" height="7" fill="rgb(255,255,255)"/><rect x="290" y="229" width="59" height="7" fill="rgb(255,255,255)"/><rect x="348" y="229" width="59" height="7" fill="rgb(255,255,255)"/><rect x="406" y="229" width="59" height="7" fill="rgb(255,255,255)"/><rect x="464" y="229" width="59" height="7" fill="rgb(255,255,255)"/><rect x="522" y="229" width="59" height="7" fill="rgb(255,255,255)"/><rect x="580" y="229" width="59" height="7" fill="rgb(255,255,255)"/><rect x="638" y="229" width="59" height="7" fill="rgb(251,251,251)"/><rect x="696" y="229" width="59" height="7" fill="rgb(235,235,235)"/><rect x="0" y="235" width="59" height="7" fill="rgb(255,255,255)"/><rect x="58" y="235" width="59" height="7" fill="rgb(255,255,255)"/><rect x="116" y="235" width="59" height="7" fill="rgb(255,255,255)"/><rect x="174" y="235" width="59" height="7" fill="rgb(255,255,255)"/><rect x="232" y="235" width="59" height="7" fill="rgb(255,255,255)"/><rect x="290" y="235" width="59" height="7" fill="rgb(255,255,255)"/><rect x="348" y="235" width="59" height="7" fill="rgb(255,255,255)"/><rect x="406" y="235" width="59" height="7" fill="rgb(255,255,255)"/><rect x="464" y="235" width="59" height="7" fill="rgb(255,255,255)"/><rect x="522" y="235" width="59" height="7" fill="rgb(255,255,255)"/><rect x="580" y="235" width="59" height="7" fill="rgb(255,255,255)"/><rect x="638" y="235" width="59" height="7" fill="rgb(255,255,255)"/><rect x="696" y="235" width="59" height="7" fill="rgb(249,249,249)"/><rect x="0" y="241" width="59" height="7" fill="rgb(255,255,255)"/><rect x="58" y="241" width="59" height="7" fill="rgb(255,255,255)"/><rect x="116" y="241" width="59" height="7" fill="rgb(255,255,255)"/><rect x="174" y="241" width="59" height="7" fill="rgb(255,255,255)"/><rect x="232" y="241" width="59" height="7" fill="rgb(255,255,255)"/><rect x="290" y="241" width="59" height="7" fill="rgb(255,255,255)"/><rect x="348" y="241" width="59" height="7" fill="rgb(255,255,255)"/><rect x="406" y="241" width="59" height="7" fill="rgb(255,255,255)"/><rect x="464" y="241" width="59" height="7" fill="rgb(255,255,255)"/><rect x="522" y="241" width="59" height="7" fill="rgb(255,255,255)"/><rect x="580" y="241" width="59" height="7" fill="rgb(255,255,255)"/><rect x="638" y="241" width="59" height="7" fill="rgb(255,255,255)"/><rect x="696" y="241" width="59" height="7" fill="rgb(255,255,255)"/><rect x="0" y="247" width="59" height="7" fill="rgb(255,255,255)"/><rect x="58" y="247" width="59" height="7" fill="rgb(255,255,255)"/><rect x="116" y="247" width="59" height="7" fill="rgb(255,255,255)"/><rect x="174" y="247" width="59" height="7" fill="rgb(255,255,255)"/><rect x="232" y="247" width="59" height="7" fill="rgb(255,255,255)"/><rect x="290" y="247" width="59" height="7" fill="rgb(255,255,255)"/><rect x="348" y="247" width="59" height="7" fill="rgb(255,255,255)"/><rect x="406" y="247" width="59" height="7" fill="rgb(255,255,255)"/><rect x="464" y="247" width="59" height="7" fill="rgb(255,255,255)"/><rect x="522" y="247" width="59" height="7" fill="rgb(255,255,255)"/><rect x="580" y="247" width="59" height="7" fill="rgb(255,255,255)"/><rect x="638" y="247" width="59" height="7" fill="rgb(255,255,255)"/><rect x="696" y="247" width="59" height="7" fill="rgb(255,255,255)"/><rect x="0" y="253" width="59" height="7" fill="rgb(255,255,255)"/><rect x="58" y="253" width="59" height="7" fill="rgb(255,255,255)"/><rect x="116" y="253" width="59" height="7" fill="rgb(255,255,255)"/><rect x="174" y="253" width="59" height="7" fill="rgb(255,255,255)"/><rect x="232" y="253" width="59" height="7" fill="rgb(255,255,255)"/><rect x="290" y="253" width="59" height="7" fill="rgb(255,255,255)"/><rect x="348" y="253" width="59" height="7" fill="rgb(255,255,255)"/><rect x="406" y="253" width="59" height="7" fill="rgb(255,255,255)"/><rect x="464" y="253" width="59" height="7" fill="rgb(255,255,255)"/><rect x="522" y="253" width="59" height="7" fill="rgb(255,255,255)"/><rect x="580" y="253" width="59" height="7" fill="rgb(255,255,255)"/><rect x="638" y="253" width="59" height="7" fill="rgb(255,255,255)"/><rect x="696" y="253" width="59" height="7" fill="rgb(255,255,255)"/><rect x="0" y="259" width="59" height="7" fill="rgb(255,255,255)"/><rect x="58" y="259" width="59" height="7" fill="rgb(255,255,255)"/><rect x="116" y="259" width="59" height="7" fill="rgb(255,255,255)"/><rect x="174" y="259" width="59" height="7" fill="rgb(255,255,255)"/><rect x="232" y="259" width="59" height="7" fill="rgb(255,255,255)"/><rect x="290" y="259" width="59" height="7" fill="rgb(255,255,255)"/><rect x="348" y="259" width="59" height="7" fill="rgb(255,255,255)"/><rect x="406" y="259" width="59" height="7" fill="rgb(255,255,255)"/><rect x="464" y="259" width="59" height="7" fill="rgb(255,255,255)"/><rect x="522" y="259" width="59" height="7" fill="rgb(255,255,255)"/><rect x="580" y="259" width="59" height="7" fill="rgb(255,255,255)"/><rect x="638" y="259" width="59" height="7" fill="rgb(255,255,255)"/><rect x="696" y="259" width="59" height="7" fill="rgb(255,255,255)"/><rect x="0" y="265" width="59" height="7" fill="rgb(255,255,255)"/><rect x="58" y="265" width="59" height="7" fill="rgb(255,255,255)"/><rect x="116" y="265" width="59" height="7" fill="rgb(255,255,255)"/><rect x="174" y="265" width="59" height="7" fill="rgb(255,255,255)"/><rect x="232" y="265" width="59" height="7" fill="rgb(255,255,255)"/><rect x="290" y="265" width="59" height="7" fill="rgb(255,255,255)"/><rect x="348" y="265" width="59" height="7" fill="rgb(255,255,255)"/><rect x="406" y="265" width="59" height="7" fill="rgb(255,255,255)"/><rect x="464" y="265" width="59" height="7" fill="rgb(255,255,255)"/><rect x="522" y="265" width="59" height="7" fill="rgb(255,255,255)"/><rect x="580" y="265" width="59" height="7" fill="rgb(255,255,255)"/><rect x="638" y="265" width="59" height="7" fill="rgb(255,255,255)"/><rect x="696" y="265" width="59" height="7" fill="rgb(255,255,255)"/><rect x="0" y="271" width="698" height="582" fill="#fff"/></mask></defs><g mask="url(#gm)" fill="none"><path d="M469.8 142.8L-20.0 157.3M442.1 142.5L718.0 156.8M470.9 142.8L-20.0 157.5M441.0 142.5L718.0 157.0M472.1 142.9L-20.0 157.6M439.8 142.6L718.0 157.1M473.2 142.9L-20.0 157.8M438.7 142.6L718.0 157.3M474.4 143.0L-20.0 158.0M437.5 142.6L718.0 157.4M475.6 143.0L-20.0 158.1M436.4 142.7L718.0 157.6M476.7 143.1L-20.0 158.3M435.2 142.7L718.0 157.8M477.9 143.2L-20.0 158.5M434.0 142.7L718.0 158.0M479.1 143.2L-20.0 158.6M432.9 142.7L718.0 158.1M480.3 143.3L-20.0 158.8M431.7 142.8L718.0 158.3M481.5 143.3L-20.0 159.0M430.5 142.8L718.0 158.5M482.7 143.4L-20.0 159.1M429.3 142.8L718.0 158.7M483.9 143.5L-20.0 159.3M428.2 142.9L718.0 158.8M485.1 143.5L-20.0 159.5M427.0 142.9L718.0 159.0M486.4 143.6L-20.0 159.7M425.8 142.9L718.0 159.2M487.6 143.6L-20.0 159.9M424.6 143.0L718.0 159.4M488.9 143.7L-20.0 160.0M423.4 143.0L718.0 159.6M490.1 143.8L-20.0 160.2M422.2 143.0L718.0 159.8M491.4 143.8L-20.0 160.4M420.9 143.1L718.0 160.0M492.7 143.9L-20.0 160.6M419.7 143.1L718.0 160.2M493.9 143.9L-20.0 160.8M418.5 143.2L718.0 160.4M495.2 144.0L-20.0 161.0M417.3 143.2L718.0 160.6M496.5 144.1L-20.0 161.2M416.0 143.2L718.0 160.8M497.8 144.1L-20.0 161.4M414.8 143.3L718.0 161.0M499.1 144.2L-20.0 161.6M413.6 143.3L718.0 161.2M500.5 144.3L-20.0 161.8M412.3 143.3L718.0 161.4M501.8 144.3L-20.0 162.0M411.1 143.4L718.0 161.6M503.1 144.4L-20.0 162.2M409.8 143.4L718.0 161.8M504.5 144.5L-20.0 162.4M408.6 143.4L718.0 162.0M505.8 144.5L-20.0 162.6M407.3 143.5L718.0 162.3M507.2 144.6L-20.0 162.8M406.0 143.5L718.0 162.5M508.6 144.7L-20.0 163.1M404.8 143.5L718.0 162.7M509.9 144.7L-20.0 163.3M403.5 143.6L718.0 162.9M511.3 144.8L-20.0 163.5M402.2 143.6L718.0 163.2M512.7 144.9L-20.0 163.7M400.9 143.6L718.0 163.4M514.1 144.9L-20.0 163.9M399.6 143.7L718.0 163.6M515.6 145.0L-20.0 164.2M398.3 143.7L718.0 163.9M517.0 145.1L-20.0 164.4M397.0 143.8L718.0 164.1M518.4 145.1L-20.0 164.6M395.7 143.8L718.0 164.3M519.9 145.2L-20.0 164.9M394.4 143.8L718.0 164.6M521.3 145.3L-20.0 165.1M393.1 143.9L718.0 164.8M522.8 145.4L-20.0 165.4M391.8 143.9L718.0 165.1M524.3 145.4L-20.0 165.6M390.5 143.9L718.0 165.3M525.7 145.5L-20.0 165.9M389.1 144.0L718.0 165.6M527.2 145.6L-20.0 166.1M387.8 144.0L718.0 165.9M528.7 145.6L-20.0 166.4M386.5 144.0L718.0 166.1M530.3 145.7L-20.0 166.6M385.1 144.1L718.0 166.4M531.8 145.8L-20.0 166.9M383.8 144.1L718.0 166.7M533.3 145.9L-20.0 167.1M382.4 144.2L718.0 166.9M534.9 145.9L-20.0 167.4M381.1 144.2L718.0 167.2M536.4 146.0L-20.0 167.7M379.7 144.2L718.0 167.5M538.0 146.1L-20.0 167.9M378.3 144.3L718.0 167.8M539.6 146.2L-20.0 168.2M377.0 144.3L718.0 168.1M541.2 146.3L-20.0 168.5M375.6 144.4L718.0 168.4M542.8 146.3L-20.0 168.8M374.2 144.4L718.0 168.7M544.4 146.4L-20.0 169.1M372.8 144.4L718.0 169.0M546.0 146.5L-20.0 169.4M371.4 144.5L718.0 169.3M547.6 146.6L-20.0 169.7M370.0 144.5L718.0 169.6M549.3 146.6L-20.0 170.0M368.6 144.6L718.0 169.9M550.9 146.7L-20.0 170.3M367.2 144.6L718.0 170.2M552.6 146.8L-20.0 170.6M365.8 144.6L718.0 170.5M554.3 146.9L-20.0 170.9M364.3 144.7L718.0 170.9M556.0 147.0L-20.0 171.2M362.9 144.7L718.0 171.2M557.7 147.1L-20.0 171.5M361.5 144.7L718.0 171.5M559.4 147.1L-20.0 171.8M360.0 144.8L718.0 171.9M561.2 147.2L-20.0 172.2M358.6 144.8L718.0 172.2M562.9 147.3L-20.0 172.5M357.1 144.9L718.0 172.6M564.7 147.4L-20.0 172.8M355.7 144.9L718.0 172.9M566.4 147.5L-20.0 173.2M354.2 145.0L718.0 173.3M568.2 147.6L-20.0 173.5M352.8 145.0L718.0 173.7M570.0 147.7L-20.0 173.9M351.3 145.0L718.0 174.0M571.8 147.8L-20.0 174.2M349.8 145.1L718.0 174.4M573.7 147.8L-20.0 174.6M348.3 145.1L718.0 174.8M575.5 147.9L-20.0 175.0M346.8 145.2L718.0 175.2M577.3 148.0L-20.0 175.3M345.3 145.2L718.0 175.6M579.2 148.1L-20.0 175.7M343.8 145.2L718.0 176.0M581.1 148.2L-20.0 176.1M342.3 145.3L718.0 176.4M583.0 148.3L-20.0 176.5M340.8 145.3L718.0 176.8M584.9 148.4L-20.0 176.9M339.3 145.4L718.0 177.2M586.8 148.5L-20.0 177.3M337.8 145.4L718.0 177.7M588.8 148.6L-20.0 177.7M336.2 145.5L718.0 178.1M590.7 148.7L-20.0 178.1M334.7 145.5L718.0 178.5M592.7 148.8L-20.0 178.5M333.1 145.5L718.0 179.0M594.7 148.9L-20.0 179.0M331.6 145.6L718.0 179.4M596.7 149.0L-20.0 179.4M330.0 145.6L718.0 179.9M598.7 149.1L-20.0 179.8M328.5 145.7L718.0 180.4M600.7 149.2L-20.0 180.3M326.9 145.7L718.0 180.9M602.8 149.3L-20.0 180.7M325.3 145.8L718.0 181.3M604.8 149.4L-20.0 181.2M323.7 145.8L718.0 181.8M606.9 149.5L-20.0 181.7M322.2 145.9L718.0 182.3M609.0 149.6L-20.0 182.2M320.6 145.9L718.0 182.9M611.1 149.7L-20.0 182.6M319.0 145.9L718.0 183.4M613.3 149.8L-20.0 183.1M317.4 146.0L718.0 183.9M615.4 149.9L-20.0 183.6M315.7 146.0L718.0 184.5M617.6 150.0L-20.0 184.1M314.1 146.1L718.0 185.0M619.8 150.1L-20.0 184.7M312.5 146.1L718.0 185.6M622.0 150.2L-20.0 185.2M310.8 146.2L718.0 186.2M624.2 150.3L-20.0 185.7M309.2 146.2L718.0 186.7M626.4 150.4L-20.0 186.3M307.6 146.3L718.0 187.3M628.7 150.5L-20.0 186.8M305.9 146.3L718.0 187.9M631.0 150.6L-20.0 187.4M304.2 146.4L718.0 188.6M633.3 150.7L-20.0 188.0M302.6 146.4L718.0 189.2M635.6 150.9L-20.0 188.6M300.9 146.4L718.0 189.8M637.9 151.0L-20.0 189.2M299.2 146.5L718.0 190.5M640.3 151.1L-20.0 189.8M297.5 146.5L718.0 191.2M642.6 151.2L-20.0 190.4M295.8 146.6L718.0 191.8M645.0 151.3L-20.0 191.0M294.1 146.6L718.0 192.5M647.4 151.4L-20.0 191.7M292.4 146.7L718.0 193.3M649.9 151.6L-20.0 192.3M290.7 146.7L718.0 194.0M652.3 151.7L-20.0 193.0M289.0 146.8L718.0 194.7M654.8 151.8L-20.0 193.7M287.2 146.8L718.0 195.5M657.3 151.9L-20.0 194.4M285.5 146.9L718.0 196.3M659.8 152.0L-20.0 195.1M283.7 146.9L718.0 197.1M662.4 152.2L-20.0 195.8M282.0 147.0L718.0 197.9M665.0 152.3L-20.0 196.6M280.2 147.0L718.0 198.7M667.5 152.4L-20.0 197.3M278.4 147.1L718.0 199.5M670.2 152.6L-20.0 198.1M276.7 147.1L718.0 200.4M672.8 152.7L-20.0 198.9M274.9 147.2L718.0 201.3M675.5 152.8L-20.0 199.7M273.1 147.2L718.0 202.2M678.1 152.9L-20.0 200.5M271.3 147.3L718.0 203.1M680.9 153.1L-20.0 201.4M269.5 147.3L718.0 204.1M683.6 153.2L-20.0 202.2M267.6 147.4L718.0 205.0M686.4 153.3L-20.0 203.1M265.8 147.4L718.0 206.0M689.1 153.5L-20.0 204.0M264.0 147.5L718.0 207.1M692.0 153.6L-20.0 204.9M262.1 147.5L718.0 208.1M694.8 153.8L-20.0 205.9M260.3 147.6L718.0 209.2M697.7 153.9L-20.0 206.9M258.4 147.6L718.0 210.3M700.5 154.0L-20.0 207.8M256.6 147.7L718.0 211.4M703.5 154.2L-20.0 208.9M254.7 147.7L718.0 212.6M706.4 154.3L-20.0 209.9M252.8 147.8L718.0 213.8M709.4 154.5L-20.0 211.0M250.9 147.8L718.0 215.0M712.4 154.6L-20.0 212.1M249.0 147.9L718.0 216.3M715.4 154.8L-20.0 213.2M247.1 148.0L718.0 217.6M718.0 155.0L-20.0 214.3M245.2 148.0L718.0 218.9M718.0 155.4L-20.0 215.5M243.2 148.1L718.0 220.3M718.0 155.8L-20.0 216.7M241.3 148.1L718.0 221.7M718.0 156.2L-20.0 217.9M239.4 148.2L718.0 223.1M718.0 156.6L-20.0 219.2M237.4 148.2L718.0 224.6M718.0 157.1L-20.0 220.5M235.5 148.3L718.0 226.1M718.0 157.5L-20.0 221.9M233.5 148.3L718.0 227.7M718.0 158.0L-20.0 223.3M231.5 148.4L718.0 229.4M718.0 158.5L-20.0 224.7M229.5 148.4L718.0 231.1M718.0 159.0L-20.0 226.1M227.5 148.5L718.0 232.8M718.0 159.5L-20.0 227.6M225.5 148.6L718.0 234.6M718.0 160.1L-20.0 229.2M223.5 148.6L718.0 236.5M718.0 160.6L-20.0 230.8M221.5 148.7L718.0 238.4M718.0 161.2L-20.0 232.4M219.4 148.7L718.0 240.4M718.0 161.8L-20.0 234.1M217.4 148.8L718.0 242.5M718.0 162.4L-20.0 235.9M215.3 148.8L718.0 244.6M718.0 163.0L-20.0 237.7M213.3 148.9L718.0 246.8M718.0 163.6L-20.0 239.6M211.2 149.0L718.0 249.2M718.0 164.3L-20.0 241.5M209.1 149.0L718.0 251.5M718.0 165.0L-20.0 243.5M207.0 149.1L718.0 254.0M718.0 165.7L-20.0 245.6M204.9 149.1L718.0 256.6M718.0 166.4L-20.0 247.7M202.8 149.2L718.0 259.3M718.0 167.2L-20.0 250.0M200.7 149.3L718.0 262.1M718.0 168.0L-20.0 252.2M198.6 149.3L718.0 265.0M718.0 168.8L-20.0 254.6M196.4 149.4L718.0 268.1M718.0 169.6L-20.0 257.1M194.3 149.4L718.0 271.3M718.0 170.5L-20.0 259.7M192.1 149.5L718.0 274.6M718.0 171.4L-20.0 262.4M189.9 149.6L718.0 278.1M718.0 172.4L-20.0 265.1M187.8 149.6L718.0 281.7M718.0 173.4L-20.0 268.0M185.6 149.7L718.0 285.5M718.0 174.4L-20.0 271.0M183.4 149.7L718.0 289.5M718.0 175.5L-20.0 274.2M181.1 149.8L718.0 293.7M718.0 176.6L-20.0 277.5M178.9 149.9L718.0 298.2M718.0 177.8L-20.0 280.9M176.7 149.9L718.0 302.8M718.0 179.0L-20.0 284.5M174.4 150.0L718.0 307.8M718.0 180.3L-20.0 288.2M172.2 150.1L718.0 313.0M718.0 181.7L-20.0 292.2M169.9 150.1L718.0 318.5M718.0 183.1L-20.0 296.3M167.6 150.2L718.0 324.3M718.0 184.6L-20.0 300.6M165.3 150.2L718.0 330.5M718.0 186.1L-20.0 305.2M163.0 150.3L718.0 337.1M718.0 187.8L-20.0 310.0M160.7 150.4L718.0 344.1M718.0 189.5L-20.0 315.0M158.4 150.4L718.0 351.6M718.0 191.3L-20.0 320.4M156.1 150.5L718.0 359.7M718.0 193.3L-20.0 326.0M153.7 150.6L718.0 368.3M718.0 195.3L-20.0 332.0M151.4 150.6L718.0 377.6M718.0 197.5L-20.0 338.3M149.0 150.7L718.0 387.6M718.0 199.8L-20.0 345.1M146.6 150.8L718.0 398.5M718.0 202.3L-20.0 352.3M144.2 150.8L718.0 410.2M718.0 204.9L-20.0 359.9M141.8 150.9L718.0 423.1M718.0 207.7L-20.0 368.1M139.4 151.0L718.0 437.1M718.0 210.7L-20.0 376.9M136.9 151.0L718.0 452.5M718.0 214.0L-20.0 386.4M134.5 151.1L718.0 469.5M718.0 217.4L-20.0 396.5M132.0 151.2L718.0 488.4M718.0 221.2L-20.0 407.5M129.6 151.2L718.0 509.5M718.0 225.3L-20.0 419.5M127.1 151.3L718.0 533.1M718.0 229.8L-20.0 432.4M124.6 151.4L718.0 559.8M718.0 234.6L-20.0 446.6M122.1 151.5L718.0 590.3M718.0 239.9L-20.0 462.1M119.6 151.5L688.6 602.0M718.0 245.8L-20.0 479.2M117.0 151.6L643.2 602.0M718.0 252.3L-20.0 498.1M114.5 151.7L597.9 602.0M718.0 259.5L-20.0 519.1M111.9 151.7L552.5 602.0M718.0 267.6L-20.0 542.7M109.4 151.8L507.2 602.0M718.0 276.7L-20.0 569.2M106.8 151.9L461.8 602.0M718.0 287.0L-20.0 599.3M104.2 152.0L416.4 602.0M718.0 298.8L50.1 602.0M101.6 152.0L371.1 602.0M718.0 312.5L126.5 602.0M98.9 152.1L325.7 602.0M718.0 328.5L202.9 602.0M96.3 152.2L280.4 602.0M718.0 347.5L279.3 602.0M93.7 152.3L235.0 602.0M718.0 370.3L355.7 602.0M91.0 152.3L189.7 602.0M718.0 398.4L432.1 602.0M88.3 152.4L144.3 602.0M718.0 433.6L508.5 602.0M85.6 152.5L98.9 602.0M718.0 479.2L584.9 602.0M82.9 152.6L53.6 602.0M718.0 540.6L661.3 602.0M80.2 152.6L8.2 602.0M77.4 152.7L-20.0 534.8M74.7 152.8L-20.0 423.4M71.9 152.9L-20.0 359.5M69.1 152.9L-20.0 318.1M66.3 153.0L-20.0 289.1M63.5 153.1L-20.0 267.6M60.7 153.2L-20.0 251.1M57.8 153.3L-20.0 237.9M55.0 153.3L-20.0 227.3M52.1 153.4L-20.0 218.4M49.2 153.5L-20.0 211.0M46.3 153.6L-20.0 204.6M43.4 153.7L-20.0 199.1M40.4 153.7L-20.0 194.3M37.5 153.8L-20.0 190.1M34.5 153.9L-20.0 186.4M31.5 154.0L-20.0 183.0M28.5 154.1L-20.0 180.0M25.5 154.2L-20.0 177.3M22.4 154.3L-20.0 174.9M19.4 154.3L-20.0 172.6M16.3 154.4L-20.0 170.6M13.2 154.5L-20.0 168.7M10.1 154.6L-20.0 166.9M7.0 154.7L-20.0 165.3M3.8 154.8L-20.0 163.8M0.7 154.9L-20.0 162.5M-2.5 154.9L-20.0 161.2M-5.7 155.0L-20.0 159.9M-8.9 155.1L-20.0 158.8M-12.2 155.2L-20.0 157.7M-15.4 155.3L-20.0 156.7M-18.7 155.4L-20.0 155.8" stroke="#bdb8ad" stroke-opacity=".035" stroke-width="1"/><path d="M460.9 142.3L-20.0 156.1M451.1 142.2L718.0 155.5M469.8 142.8L-20.0 157.3M442.1 142.5L718.0 156.8M479.1 143.2L-20.0 158.6M432.9 142.7L718.0 158.1M488.9 143.7L-20.0 160.0M423.4 143.0L718.0 159.6M499.1 144.2L-20.0 161.6M413.6 143.3L718.0 161.2M509.9 144.7L-20.0 163.3M403.5 143.6L718.0 162.9M521.3 145.3L-20.0 165.1M393.1 143.9L718.0 164.8M533.3 145.9L-20.0 167.1M382.4 144.2L718.0 166.9M546.0 146.5L-20.0 169.4M371.4 144.5L718.0 169.3M559.4 147.1L-20.0 171.8M360.0 144.8L718.0 171.9M573.7 147.8L-20.0 174.6M348.3 145.1L718.0 174.8M588.8 148.6L-20.0 177.7M336.2 145.5L718.0 178.1M604.8 149.4L-20.0 181.2M323.7 145.8L718.0 181.8M622.0 150.2L-20.0 185.2M310.8 146.2L718.0 186.2M640.3 151.1L-20.0 189.8M297.5 146.5L718.0 191.2M659.8 152.0L-20.0 195.1M283.7 146.9L718.0 197.1M680.9 153.1L-20.0 201.4M269.5 147.3L718.0 204.1M703.5 154.2L-20.0 208.9M254.7 147.7L718.0 212.6M718.0 156.2L-20.0 217.9M239.4 148.2L718.0 223.1M718.0 160.1L-20.0 229.2M223.5 148.6L718.0 236.5M718.0 165.0L-20.0 243.5M207.0 149.1L718.0 254.0M718.0 171.4L-20.0 262.4M189.9 149.6L718.0 278.1M718.0 180.3L-20.0 288.2M172.2 150.1L718.0 313.0M718.0 193.3L-20.0 326.0M153.7 150.6L718.0 368.3M718.0 214.0L-20.0 386.4M134.5 151.1L718.0 469.5M718.0 252.3L-20.0 498.1M114.5 151.7L597.9 602.0M718.0 347.5L279.3 602.0M93.7 152.3L235.0 602.0M71.9 152.9L-20.0 359.5M49.2 153.5L-20.0 211.0M25.5 154.2L-20.0 177.3M0.7 154.9L-20.0 162.5" stroke="#c9c5ba" stroke-opacity=".25" stroke-width="1"/></g><path d="M95.7 134.1L619.3 622.0" stroke="#ee3a63" stroke-width="2" fill="none"/><path d="M738.0 245.6L-40.0 504.8" stroke="#2ea4ea" stroke-width="2" fill="none"/><path d="M351.4 622.0L355.6 -40.0" stroke="#a6e50c" stroke-width="1.5" fill="none"/><circle cx="354.0" cy="210.8" r="88.5" fill="none" stroke="#c8c8c8" stroke-opacity=".55" stroke-width="1"/><path d="M408.9 228.5L405.9 229.0L402.8 229.4L399.6 229.7L396.4 230.1L393.0 230.4L389.6 230.7L386.1 231.0L382.5 231.3L378.9 231.5L375.2 231.7L371.5 231.8L367.7 231.9L363.9 232.0L360.1 232.1L356.3 232.1L352.5 232.1L348.7 232.1L344.9 232.0L341.1 231.9L337.3 231.8L333.6 231.6L329.9 231.4L326.3 231.2L322.7 230.9L319.2 230.6L315.8 230.3L312.4 230.0L309.1 229.6L305.9 229.2L302.8 228.8L299.9 228.4L297.0 227.9L294.2 227.5L291.5 227.0L289.0 226.4L286.5 225.9L284.2 225.4L282.1 224.8L280.0 224.2L278.1 223.6L276.3 223.0L274.6 222.4L273.0 221.8L271.6 221.2L270.4 220.5L269.2 219.9L268.2 219.3L267.3 218.6L266.5 218.0L265.9 217.3L265.3 216.7L264.9 216.0L264.7 215.4L264.5 214.8L264.4 214.1L264.5 213.5L264.7 212.9L265.0 212.3L265.4 211.6L265.8 211.0M441.8 210.6L442.4 211.2L442.9 211.8L443.3 212.4L443.6 213.1L443.8 213.7L443.9 214.3L443.9 215.0L443.8 215.6L443.5 216.2L443.1 216.9L442.6 217.5L442.0 218.2L441.2 218.8L440.4 219.5L439.3 220.1L438.2 220.7L436.9 221.4L435.5 222.0L434.0 222.6L432.4 223.2L430.6 223.8L428.7 224.4L426.6 225.0L424.4 225.5L422.1 226.1L419.7 226.6L417.2 227.1L414.5 227.6L411.8 228.1L408.9 228.5" stroke="#a6e50c" stroke-width="3" fill="none" stroke-linecap="round"/><path d="M354.6 115.3L351.8 115.4L348.9 115.5L346.0 115.8L343.1 116.2L340.2 116.8L337.3 117.5L334.4 118.3L331.5 119.2L328.6 120.3L325.7 121.5L322.9 122.8L320.1 124.2L317.3 125.8L314.6 127.5L311.9 129.4L309.2 131.3L306.6 133.4L304.1 135.6L301.6 137.8L299.2 140.2L296.9 142.7L294.6 145.3L292.4 148.0L290.3 150.8L288.3 153.7L286.4 156.6L284.6 159.7L282.9 162.8L281.2 165.9L279.7 169.1L278.3 172.4L277.0 175.7L275.8 179.1L274.7 182.5L273.7 185.9L272.9 189.4L272.1 192.8L271.5 196.3L271.0 199.8L270.6 203.3L270.3 206.8L270.2 210.3L270.1 213.7L270.2 217.1L270.4 220.5L270.6 223.9L271.0 227.2L271.6 230.5L272.2 233.7L272.9 236.9L273.7 240.0L274.6 243.1L275.7 246.1L276.8 249.0L278.0 251.9L279.3 254.7L280.7 257.3L282.1 260.0L283.7 262.5L285.3 264.9L287.0 267.3L288.8 269.5L290.6 271.7L292.5 273.8L294.4 275.7L296.5 277.6L298.5 279.4L300.6 281.1L302.8 282.6L305.0 284.1L307.3 285.5M402.6 138.1L400.8 136.1L398.9 134.2L397.0 132.3L395.0 130.5L392.9 128.8L390.7 127.2L388.5 125.7L386.2 124.2L383.8 122.9L381.4 121.6L378.9 120.5L376.4 119.5L373.8 118.6L371.2 117.7L368.5 117.0L365.8 116.5L363.1 116.0L360.3 115.7L357.5 115.4L354.6 115.3" stroke="#ee3a63" stroke-width="2.6" fill="none" stroke-linecap="round"/><path d="M408.9 228.5L409.0 224.9L409.1 221.2L409.1 217.4L409.1 213.7L408.9 209.9L408.7 206.1L408.3 202.2L407.9 198.4L407.4 194.6L406.9 190.8L406.2 187.1L405.5 183.4L404.7 179.7L403.8 176.0L402.9 172.4L401.8 168.9L400.7 165.5L399.6 162.1L398.4 158.8L397.1 155.6L395.7 152.5L394.3 149.5L392.9 146.6L391.4 143.8L389.8 141.1L388.2 138.5L386.6 136.1L384.9 133.8L383.2 131.6L381.5 129.6L379.8 127.7L378.0 125.9L376.2 124.3L374.4 122.8L372.6 121.4L370.8 120.2L369.0 119.1L367.1 118.2L365.3 117.3L363.5 116.7L361.7 116.1L359.9 115.7L358.1 115.5L356.4 115.3L354.6 115.3L352.9 115.5L351.2 115.7L349.6 116.1L347.9 116.5L346.3 117.1L344.7 117.8L343.2 118.6L341.6 119.6L340.2 120.6L338.7 121.7L337.3 122.9L335.9 124.2L334.6 125.6M372.0 296.9L373.6 296.6L375.1 296.2L376.7 295.7L378.3 295.1L379.8 294.4L381.3 293.6L382.9 292.6L384.4 291.5L385.8 290.4L387.3 289.1L388.7 287.6L390.2 286.1L391.5 284.4L392.9 282.6L394.2 280.7L395.5 278.7L396.7 276.6L397.9 274.3L399.1 272.0L400.2 269.5L401.2 266.9L402.2 264.2L403.1 261.4L404.0 258.5L404.8 255.5L405.6 252.4L406.3 249.2L406.9 246.0L407.4 242.6L407.9 239.2L408.3 235.7L408.6 232.1L408.9 228.5" stroke="#2ea4ea" stroke-width="2.6" fill="none" stroke-linecap="round"/><path d="M354.0 210.8L354.8 84.9" stroke="#a6e50c" stroke-width="2.4" fill="none"/><path d="M345.9 84.9L355.0 51.9L363.7 84.9L363.3 85.1L362.4 85.3L360.9 85.5L359.0 85.6L356.9 85.6L354.6 85.7L352.4 85.6L350.3 85.6L348.5 85.4L347.1 85.3L346.2 85.1Z" fill="#a6e50c"/><path d="M354.0 210.8L242.8 223.7" stroke="#2ea4ea" stroke-width="2.4" fill="none"/><path d="M212.5 227.2L241.3 214.5L242.0 214.6L242.7 215.3L243.5 216.6L244.2 218.5L244.9 220.7L245.4 223.1L245.7 225.5L245.8 227.8L245.7 229.9L245.4 231.4L245.0 232.5L244.4 232.9Z" fill="#2ea4ea"/><path d="M354.0 210.8L429.0 235.0" stroke="#ee3a63" stroke-width="2.4" fill="none"/><path d="M421.0 236.3L421.4 233.7L422.4 231.1L423.9 228.8L425.6 226.9L427.6 225.6L429.7 224.9L431.7 224.9L433.6 225.7L452.5 242.6L428.2 244.9L426.2 244.9L424.4 244.3L422.9 243.0L421.7 241.2L421.1 238.9Z" fill="#ee3a63"/><path d="M333.3 186.8L333.1 168.4L317.0 169.4L317.5 188.1Z" fill="#ee3a63"/><path d="M368.5 188.3L378.2 190.5L378.8 170.7L368.9 169.1Z" fill="#2ea4ea"/><g transform="translate(354.5 210.8) scale(2.700) translate(-8 -7.800)"><path d="M9.500 2a3 3 0 0 0-2.830 2A3 3 0 0 0 4 2.500 3 3 0 0 0 2.500 8.100V12a1 1 0 0 0 1 1h6.500a1 1 0 0 0 1-1v-1.200L14.500 13V7l-3.500 2.200V7.600A3 3 0 0 0 9.500 2z" fill="#cbcab6" stroke="#5a5444" stroke-width=".800" stroke-linejoin="round"/><circle cx="9.500" cy="5" r="1" fill="#4b4538" fill-opacity=".8"/><circle cx="4.500" cy="5.600" r="1" fill="#4b4538" fill-opacity=".0"/></g><path d="M354.0 210.8L318.2 215.0" stroke="#2ea4ea" stroke-width="2.2"/><path d="M354.0 210.8L376.5 218.1" stroke="#ee3a63" stroke-width="2.2"/><path d="M354.0 198.8V224.8" stroke="#a6e50c" stroke-width="2.4"/><path d="M352.0 219.8l-22 -2.500l14 6z" fill="#a6e50c"/></svg><div class="a" style="left:10px;top:10px;width:104px;height:28px;background:rgba(0,0,0,.3);border-radius:3px"></div><svg class="ic" style="left:14px;top:16px" viewBox="0 0 16 16"><circle cx="8" cy="2" r="2" fill="#dcdddf"/><circle cx="8" cy="8" r="2" fill="#dcdddf"/><circle cx="8" cy="14" r="2" fill="#dcdddf"/></svg><div class="t" style="left:34px;top:13.500px;font-size:14.340px;color:#d9dadc">Perspective</div><svg style="left:0;top:0;width:698px;height:582px" viewBox="0 0 698 582"><circle cx="632.6" cy="40.1" r="8.0" fill="#b04e63" stroke="#c77a8b" stroke-width="1"/><circle cx="673.9" cy="43.9" r="8.0" fill="#2e6bb0" stroke="#4d8ed6" stroke-width="1"/><circle cx="647.8" cy="77.7" r="8.0" fill="#5f9412" stroke="#86c22c" stroke-width="1"/><path d="M647.8 49.0L647.8 21.7" stroke="#8cd600" stroke-width="2.800"/><path d="M647.8 49.0L622.2 55.4" stroke="#2e8eea" stroke-width="2.800"/><path d="M647.8 49.0L663.2 59.4" stroke="#f0334f" stroke-width="2.800"/><circle cx="647.8" cy="21.7" r="8.7" fill="#8cd600"/><circle cx="622.2" cy="55.4" r="8.7" fill="#2e8eea"/><circle cx="663.2" cy="59.4" r="8.7" fill="#f0334f"/><text x="647.8" y="25.9" font-family="Liberation Sans" font-size="12" text-anchor="middle" fill="#101010">Y</text><text x="622.2" y="59.6" font-family="Liberation Sans" font-size="12" text-anchor="middle" fill="#101010">Z</text><text x="663.2" y="63.6" font-family="Liberation Sans" font-size="12" text-anchor="middle" fill="#101010">X</text></svg>
</div>
<div class="a" style="left:255px;top:69px;width:698px;height:582px;border:2px solid rgba(70,204,255,.55);pointer-events:none"></div>
<div class="dock" style="left:255px;top:655px;width:698px;height:252px;"></div>
<div class="a" style="left:259px;top:661px;width:626px;height:175px;background:var(--d1);border-radius:3px;overflow:hidden"><div class="mono" style="position:absolute;left:4.5px;top:-3px;font-size:12.8px;line-height:16.03px;white-space:pre;color:#cdcfd2">x: 3z: 3
x: 3z: 4
x: 4z: -4
x: 4z: -3
x: 4z: -2
x: 4z: -1
x: 4z: 0
x: 4z: 1
x: 4z: 2
x: 4z: 3
x: 4z: 4</div></div>
<div class="a" style="left:877px;top:667px;width:4px;height:166px;background:#2e3237;border-radius:2px"></div>
<div class="a" style="left:877px;top:818.5px;width:4px;height:14px;background:#6d7074;border-radius:2px"></div>
<svg class="ic" style="left:895.0px;top:666.0px;width:16px;height:16px" viewBox="0 0 16 16"><path d="M7 1v6H5.500a1.500 1.500 0 0 0-1.500 1.500V10h8V8.500A1.500 1.500 0 0 0 10.500 7H9V1zM4 11l-1 4h10l-1-4z" fill="#e0e0e0"/></svg>
<svg class="ic" style="left:927.0px;top:666.0px;width:16px;height:16px" viewBox="0 0 16 16"><path d="M2 1a1 1 0 0 0-1 1v9h2V3h8V1zM6 5a1 1 0 0 0-1 1v8a1 1 0 0 0 1 1h8a1 1 0 0 0 1-1V6a1 1 0 0 0-1-1zm1 2h6v6H7z" fill="#e0e0e0"/></svg>
<div class="a" style="left:888px;top:692px;width:61px;height:1px;background:#4d5156"></div>
<svg class="ic" style="left:895.0px;top:704.0px;width:16px;height:16px" viewBox="0 0 16 16"><path d="M4 3 1 7h2v6h2V7h2zM8 3v2h7V3zM8 7v2h7V7zM8 11v2h7v-2z" fill="#e0e0e0"/></svg>
<div class="btnon" style="left:921px;top:699px;width:28px;height:26px;"></div>
<svg class="ic" style="left:927.0px;top:704.0px;width:16px;height:16px" viewBox="0 0 16 16"><path d="M6.5 1.5a5 5 0 1 0 2.9 9.1l3.9 3.9 1.4-1.4-3.9-3.9A5 5 0 0 0 6.5 1.5zm0 2a3 3 0 0 1 0 6 3 3 0 0 1 0-6z" fill="#46c3fb"/></svg>
<div class="a" style="left:888px;top:730px;width:61px;height:1px;background:#4d5156"></div>
<div class="a" style="left:889px;top:737px;width:60px;height:29.5px;background:#20262b;border-radius:3px;border-bottom:2px solid #3daee9"></div>
<svg class="ic" style="left:894.5px;top:743.5px;width:16px;height:16px" viewBox="0 0 16 16"><rect x="1" y="1" width="14" height="14" rx="2" fill="#e0e0e0"/><path d="M7 3h2v6H7zM7 11h2v2H7z" fill="#25292e"/></svg>
<div class="t" style="left:911px;top:742px;width:34px;text-align:center;color:#3daee9">244</div>
<div class="a" style="left:889px;top:771px;width:60px;height:29.5px;background:#20262b;border-radius:3px;border-bottom:2px solid #3daee9"></div>
<svg class="ic" style="left:894.5px;top:777.5px;width:16px;height:16px" viewBox="0 0 16 16"><circle cx="8" cy="8" r="7" fill="#ff6b5e"/><path d="M5 5l6 6M11 5l-6 6" stroke="#25292e" stroke-width="2" stroke-linecap="round"/></svg>
<div class="t" style="left:911px;top:776px;width:34px;text-align:center;color:#3daee9">0</div>
<div class="a" style="left:889px;top:805px;width:60px;height:29.5px;background:#20262b;border-radius:3px;border-bottom:2px solid #3daee9"></div>
<svg class="ic" style="left:894.5px;top:811.5px;width:16px;height:16px" viewBox="0 0 16 16"><circle cx="8" cy="8" r="7" fill="#ffdd65"/><path d="M7 3.500h2v5.500H7zM7 10.500h2v2H7z" fill="#25292e"/></svg>
<div class="t" style="left:911px;top:810px;width:34px;text-align:center;color:#3daee9">1</div>
<div class="a" style="left:889px;top:839px;width:60px;height:29.5px;background:#20262b;border-radius:3px;border-bottom:2px solid #3daee9"></div>
<svg class="ic" style="left:894.5px;top:845.5px;width:16px;height:16px" viewBox="0 0 16 16"><path d="M6 2h4v2H6zM6 5h4v7l-2 3-2-3z" fill="#e0e0e0"/><path d="M7.200 6h1.600v5H7.200z" fill="#25292e" fill-opacity=".0"/></svg>
<div class="t" style="left:911px;top:844px;width:34px;text-align:center;color:#3daee9">2</div>
<div class="field" style="left:259px;top:841px;width:626px;height:28px;"></div>
<div class="t " style="left:265px;top:844.00px;font-size:14.31px;letter-spacing:0.000px;color:#a9acb0">Filter Messages</div>
<svg class="ic" style="left:862.5px;top:845.0px;width:16px;height:16px" viewBox="0 0 16 16"><path d="M6.5 1.5a5 5 0 1 0 2.9 9.1l3.9 3.9 1.4-1.4-3.9-3.9A5 5 0 0 0 6.5 1.5zm0 2a3 3 0 0 1 0 6 3 3 0 0 1 0-6z" fill="#e0e0e0"/></svg>
<div class="a" style="left:265px;top:884px;width:8px;height:8px;border-radius:4px;background:#45d07b"></div>
<div class="t " style="left:277px;top:878.00px;font-size:14.90px;letter-spacing:0.279px;color:#3daee9">Output</div>
<div class="t " style="left:340.5px;top:878.00px;font-size:14.85px;letter-spacing:0.000px;">Debugger</div>
<div class="t " style="left:423px;top:878.00px;font-size:14.86px;letter-spacing:0.000px;">Audio</div>
<div class="t " style="left:478px;top:878.00px;font-size:14.90px;letter-spacing:0.116px;">Animation</div>
<div class="t " style="left:562px;top:878.00px;font-size:14.59px;letter-spacing:0.000px;">Shader Editor</div>
<svg class="ic" style="left:823.0px;top:880.0px;width:16px;height:16px" viewBox="0 0 16 16"><path d="M9 1.500 5 4a5 5 0 0 0-2.500 5.500L1.500 12l9 3 .5-2.500a5 5 0 0 0 2-6zM4 13.500a2 2 0 0 0 3 1z" fill="#5a5e63"/></svg>
<div class="t dim" style="left:849px;top:878.00px;font-size:14.48px;letter-spacing:0.000px;">4.3.stable</div>
<svg class="ic" style="left:927.0px;top:880.0px;width:16px;height:16px" viewBox="0 0 16 16"><path d="M1 2v2h14V2zM4.500 6 1 10.500h2.500V14h2v-3.500H8zM11.500 6 8 10.500h2.500V14h2v-3.500H15z" fill="#e0e0e0"/></svg>
<div class="dock" style="left:957px;top:3px;width:312px;height:904px;"></div>
<div class="a" style="left:957px;top:3px;width:312px;height:28px;background:var(--d1);border-radius:3px 3px 0 0"></div>
<div class="tab" style="left:957px;top:3px;width:85px;height:28px;"></div>
<div class="t " style="left:968px;top:7.00px;font-size:14.90px;letter-spacing:0.057px;color:var(--fgb)">Inspector</div>
<div class="t dim" style="left:1053.3px;top:7.00px;font-size:14.52px;letter-spacing:0.000px;">Node</div>
<div class="t dim" style="left:1111px;top:7.00px;font-size:14.90px;letter-spacing:0.020px;">History</div>
<svg class="ic" style="left:1252.0px;top:9.0px;width:16px;height:16px" viewBox="0 0 16 16"><circle cx="8" cy="2" r="2" fill="#8c8f93"/><circle cx="8" cy="8" r="2" fill="#8c8f93"/><circle cx="8" cy="14" r="2" fill="#8c8f93"/></svg>
<svg class="ic" style="left:967.0px;top:42.0px;width:16px;height:16px" viewBox="0 0 16 16"><path d="M2 1v14h6v-1H7v-4h2V8h3V6H9V1zm8 0v4h4z" fill="#e0e0e0"/><path d="M13 13h2v-2h-2V9h-2v2H9v2h2v2h2z" fill="#5fff97"/></svg>
<svg class="ic" style="left:999.0px;top:42.0px;width:16px;height:16px" viewBox="0 0 16 16"><path d="M1.700 13.300V3.600a1 1 0 0 1 1-1h3.300l1.300 1.700h4.900a1 1 0 0 1 1 1V6.500" fill="none" stroke="#e0e0e0" stroke-width="1.300"/><path d="M1.600 14.300 4.200 7.800a1 1 0 0 1 .900-.600H14.600a.600.600 0 0 1 .600.900l-2.100 5.500a1 1 0 0 1-.900.700z" fill="#e0e0e0"/></svg>
<svg class="ic" style="left:1031.0px;top:42.0px;width:16px;height:16px" viewBox="0 0 16 16"><path d="M2.500 1A1.500 1.500 0 0 0 1 2.500v11A1.500 1.500 0 0 0 2.500 15h11a1.500 1.500 0 0 0 1.500-1.500V4l-3-3H11v5H4V1zM6 1v4h3V1zM8 9a2 2 0 0 1 0 4 2 2 0 0 1 0-4z" fill="#73777c"/></svg>
<svg class="ic" style="left:1063.0px;top:42.0px;width:16px;height:16px" viewBox="0 0 16 16"><circle cx="8" cy="2" r="2" fill="#e0e0e0"/><circle cx="8" cy="8" r="2" fill="#e0e0e0"/><circle cx="8" cy="14" r="2" fill="#e0e0e0"/></svg>
<svg class="ic" style="left:1190.5px;top:42.0px;width:16px;height:16px" viewBox="0 0 16 16"><path d="M9.700 1.500 5.200 8l4.500 6.500" fill="none" stroke="#e0e0e0" stroke-width="2" stroke-linejoin="miter"/></svg>
<svg class="ic" style="left:1214.0px;top:42.0px;width:16px;height:16px" viewBox="0 0 16 16"><path d="M6.300 1.500 10.800 8l-4.500 6.500" fill="none" stroke="#7b7f84" stroke-width="2" stroke-linejoin="miter"/></svg>
<svg class="ic" style="left:1242.0px;top:42.0px;width:16px;height:16px" viewBox="0 0 16 16"><path d="M9 2a6 6 0 0 0-5.700 4.100L2 5 1.500 9.500 5.700 8 4.900 7.200A4.200 4.200 0 1 1 9 12.200v1.800A6 6 0 0 0 9 2z" fill="#e0e0e0"/><path d="M8.200 5v3.800l3 1 .5-1.300-2-.7V5z" fill="#e0e0e0"/></svg>
<div class="field" style="left:961px;top:67px;width:271px;height:29.5px;"></div>
<svg class="ic" style="left:965.0px;top:74.0px;width:16px;height:16px" viewBox="0 0 16 16"><circle cx="8" cy="8" r="5" fill="none" stroke="#fc7f7f" stroke-width="2"/></svg>
<div class="t " style="left:989.4px;top:72.00px;font-size:14.29px;letter-spacing:0.000px;color:var(--fgb)">Elevation</div>
<svg class="ic" style="left:1212.0px;top:74.0px;width:16px;height:16px" viewBox="0 0 16 16"><path d="M4 6l4 4 4-4" fill="none" stroke="#e0e0e0" stroke-width="2.400" stroke-linecap="round" stroke-linejoin="round"/></svg>
<svg class="ic" style="left:1242.0px;top:74.0px;width:16px;height:16px" viewBox="0 0 16 16"><circle cx="9.200" cy="3.900" r="3" fill="none" stroke="#e0e0e0" stroke-width="1.900"/><path d="M7 6.100 4.200 8.700" stroke="#e0e0e0" stroke-width="1.900" stroke-linecap="round"/><text x="0.100" y="16.100" font-family="Liberation Sans" font-weight="bold" font-size="8.800" textLength="15.400" lengthAdjust="spacingAndGlyphs" fill="#e0e0e0" stroke="#e0e0e0" stroke-width=".350">DOC</text></svg>
<div class="field" style="left:961px;top:101px;width:271px;height:29px;"></div>
<div class="t " style="left:967.4px;top:105.00px;font-size:14.75px;letter-spacing:0.000px;color:#a9acb0">Filter Properties</div>
<svg class="ic" style="left:1209.5px;top:107.0px;width:16px;height:16px" viewBox="0 0 16 16"><path d="M6.5 1.5a5 5 0 1 0 2.9 9.1l3.9 3.9 1.4-1.4-3.9-3.9A5 5 0 0 0 6.5 1.5zm0 2a3 3 0 0 1 0 6 3 3 0 0 1 0-6z" fill="#e0e0e0"/></svg>
<svg class="ic" style="left:1242.0px;top:107.0px;width:16px;height:16px" viewBox="0 0 16 16"><path d="M4.200 1 3.200 2.400 3.700 3.500V8.100H2.800a1 1 0 0 0-1 1v3.300a2.700 2.700 0 0 0 5.400 0V9.100a1 1 0 0 0-1-1H4.900V3.500L5.400 2.400z" fill="#e0e0e0"/><path d="M8.200 1.200v2.700a2.900 2.900 0 0 0 1.700 2.600v7.300a1.250 1.250 0 0 0 2.500 0V6.500a2.900 2.900 0 0 0 1.700-2.600V1.200h-1.500v2.600l-1.400 1-1.400-1V1.200z" fill="#e0e0e0"/></svg>
<div class="a" style="left:961px;top:134px;width:302px;height:769px;background:var(--d1);border-radius:3px"></div>
<div class="a" style="left:965px;top:138px;width:295px;height:24px;background:#44484c;border-radius:3px"></div>
<svg class="ic" style="left:1072.7px;top:141.5px;width:16px;height:16px" viewBox="0 0 16 16"><circle cx="8" cy="8" r="5" fill="none" stroke="#fc7f7f" stroke-width="2"/></svg>
<div class="t b" style="left:1095.4px;top:139.00px;font-size:14.53px;letter-spacing:0.000px;">Node3D</div>
<div class="a" style="left:965px;top:162px;width:295px;height:326px;background:#2a2e33"></div>
<svg class="ic" style="left:967.0px;top:168.0px;width:12px;height:12px" viewBox="0 0 16 16"><path d="M4 6l4 4 4-4" fill="none" stroke="#9a9da1" stroke-width="2.400" stroke-linecap="round" stroke-linejoin="round"/></svg>
<div class="t b" style="left:981.5px;top:163.00px;font-size:14.52px;letter-spacing:0.000px;">Transform</div>
<div class="t " style="left:985.5px;top:187.00px;font-size:14.62px;letter-spacing:0.000px;">Position</div>
<svg class="ic" style="left:1239.5px;top:189.5px;width:16px;height:16px" viewBox="0 0 16 16"><path d="M8 3a5.500 5.500 0 0 0-4.300 2L2.200 3.700 1.500 8.500l4.800-.9L4.900 6.300A3.700 3.700 0 1 1 8 12.200V14A5.500 5.500 0 0 0 8 3z" fill="#e0e0e0" transform="translate(0 -.5)"/></svg>
<div class="a" style="left:977px;top:214px;width:283px;height:28.5px;background:#1e2125;border-radius:3px"></div>
<div class="a" style="left:977px;top:214px;width:20px;height:28.5px;background:#191c1f;border-radius:3px"></div>
<div class="t" style="left:977px;top:216.75px;width:20px;text-align:center;color:#b0654d">x</div>
<div class="t " style="left:1001.5px;top:217.00px;">0<span style="color:#6c7074;margin-left:6px">m</span></div>
<div class="a" style="left:1072px;top:214px;width:20px;height:28.5px;background:#191c1f;border-radius:3px"></div>
<div class="t" style="left:1072px;top:216.75px;width:20px;text-align:center;color:#5c9e52">y</div>
<div class="t " style="left:1096.5px;top:217.00px;">64<span style="color:#6c7074;margin-left:6px">m</span></div>
<div class="a" style="left:1168px;top:214px;width:19px;height:28.5px;background:#191c1f;border-radius:3px"></div>
<div class="t" style="left:1168px;top:216.75px;width:19px;text-align:center;color:#6955a8">z</div>
<div class="t " style="left:1191.5px;top:217.00px;">0<span style="color:#6c7074;margin-left:6px">m</span></div>
<div class="t " style="left:985.5px;top:248.00px;font-size:14.82px;letter-spacing:0.000px;">Rotation</div>
<div class="a" style="left:977px;top:275px;width:283px;height:29px;background:#1e2125;border-radius:3px"></div>
<div class="a" style="left:977px;top:275px;width:20px;height:29px;background:#191c1f;border-radius:3px"></div>
<div class="t" style="left:977px;top:278.0px;width:20px;text-align:center;color:#b0654d">x</div>
<div class="t " style="left:1001.5px;top:278.00px;">0<span style="color:#6c7074;margin-left:3px">°</span></div>
<div class="a" style="left:983px;top:298px;width:75px;height:2px;background:#5a5e62"></div>
<div class="a" style="left:983px;top:298px;width:39px;height:2px;background:#a0a3a6"></div>
<div class="a" style="left:1020px;top:297px;width:4px;height:4px;background:#d8d9da"></div>
<div class="a" style="left:1072px;top:275px;width:20px;height:29px;background:#191c1f;border-radius:3px"></div>
<div class="t" style="left:1072px;top:278.0px;width:20px;text-align:center;color:#5c9e52">y</div>
<div class="t " style="left:1096.5px;top:278.00px;">0<span style="color:#6c7074;margin-left:3px">°</span></div>
<div class="a" style="left:1078px;top:298px;width:75px;height:2px;background:#5a5e62"></div>
<div class="a" style="left:1078px;top:298px;width:39px;height:2px;background:#a0a3a6"></div>
<div class="a" style="left:1115px;top:297px;width:4px;height:4px;background:#d8d9da"></div>
<div class="a" style="left:1168px;top:275px;width:19px;height:29px;background:#191c1f;border-radius:3px"></div>
<div class="t" style="left:1168px;top:278.0px;width:19px;text-align:center;color:#6955a8">z</div>
<div class="t " style="left:1191.5px;top:278.00px;">0<span style="color:#6c7074;margin-left:3px">°</span></div>
<div class="a" style="left:1174px;top:298px;width:74px;height:2px;background:#5a5e62"></div>
<div class="a" style="left:1174px;top:298px;width:38px;height:2px;background:#a0a3a6"></div>
<div class="a" style="left:1210px;top:297px;width:4px;height:4px;background:#d8d9da"></div>
<div class="t " style="left:985.5px;top:309.00px;font-size:13.90px;letter-spacing:-0.334px;">Scale</div>
<div class="a" style="left:977px;top:336px;width:283px;height:29px;background:#1e2125;border-radius:3px"></div>
<div class="a" style="left:977px;top:336px;width:283px;height:29px;background:#1e2125;border-radius:3px"></div>
<div class="a" style="left:977px;top:336px;width:20px;height:29px;background:#191c1f;border-radius:3px"></div>
<div class="t" style="left:977px;top:339.0px;width:20px;text-align:center;color:#b0654d">x</div>
<div class="t " style="left:1001.5px;top:339.00px;">1</div>
<div class="a" style="left:1063px;top:336px;width:20px;height:29px;background:#191c1f;border-radius:3px"></div>
<div class="t" style="left:1063px;top:339.0px;width:20px;text-align:center;color:#5c9e52">y</div>
<div class="t " style="left:1087.5px;top:339.00px;">1</div>
<div class="a" style="left:1149px;top:336px;width:19px;height:29px;background:#191c1f;border-radius:3px"></div>
<div class="t" style="left:1149px;top:339.0px;width:19px;text-align:center;color:#6955a8">z</div>
<div class="t " style="left:1172.5px;top:339.00px;">1</div>
<svg class="ic" style="left:1240.0px;top:342.0px;width:16px;height:16px" viewBox="0 0 16 16"><g fill="none" stroke="#e0e0e0" stroke-width="2" stroke-linecap="round"><path d="M6.6 8.9a2.6 2.6 0 0 0 3.7.1l2.4-2.4a2.6 2.6 0 0 0-3.7-3.7l-.9.9"/><path d="M9.4 7.1a2.6 2.6 0 0 0-3.7-.1l-2.4 2.4a2.6 2.6 0 0 0 3.7 3.7l.9-.9"/></g></svg>
<div class="t " style="left:985.5px;top:373.00px;font-size:14.69px;letter-spacing:0.000px;">Rotation Edit Mode</div>
<div class="a" style="left:1119px;top:369px;width:141px;height:29px;background:#1e2125;border-radius:3px"></div>
<div class="t " style="left:1125.3px;top:374.00px;font-size:14.18px;letter-spacing:0.000px;">Euler</div>
<svg class="ic" style="left:1242.0px;top:376.0px;width:16px;height:16px" viewBox="0 0 16 16"><path d="M4 6l4 4 4-4" fill="none" stroke="#e0e0e0" stroke-width="2.400" stroke-linecap="round" stroke-linejoin="round"/></svg>
<div class="t " style="left:985.5px;top:407.00px;font-size:14.87px;letter-spacing:0.000px;">Rotation Order</div>
<div class="a" style="left:1119px;top:403.5px;width:141px;height:29px;background:#1e2125;border-radius:3px"></div>
<div class="t " style="left:1125.3px;top:408.00px;font-size:13.90px;letter-spacing:-0.500px;">YXZ</div>
<svg class="ic" style="left:1242.0px;top:410.0px;width:16px;height:16px" viewBox="0 0 16 16"><path d="M4 6l4 4 4-4" fill="none" stroke="#e0e0e0" stroke-width="2.400" stroke-linecap="round" stroke-linejoin="round"/></svg>
<div class="t " style="left:985.5px;top:440.00px;font-size:13.99px;letter-spacing:0.000px;">Top Level</div>
<div class="a" style="left:1119px;top:437px;width:141px;height:27.5px;background:#1e2125;border-radius:3px"></div>
<div class="a" style="left:1124px;top:444px;width:14px;height:14px;background:#46494d;border-radius:2px"></div>
<div class="t " style="left:1147.7px;top:441.00px;font-size:13.90px;letter-spacing:-0.071px;">On</div>
<svg class="ic" style="left:967.0px;top:470.0px;width:12px;height:12px" viewBox="0 0 16 16"><path d="M6 4l4 4-4 4" fill="none" stroke="#9a9da1" stroke-width="2.400" stroke-linecap="round" stroke-linejoin="round"/></svg>
<div class="t b" style="left:981.5px;top:466.00px;font-size:14.51px;letter-spacing:0.000px;">Visibility</div>
<div class="a" style="left:965px;top:489px;width:295px;height:24px;background:#44484c;border-radius:3px"></div>
<svg class="ic" style="left:1082.0px;top:492.5px;width:16px;height:16px" viewBox="0 0 16 16"><circle cx="8" cy="8" r="5" fill="none" stroke="#e0e0e0" stroke-width="2"/></svg>
<div class="t b" style="left:1104.6px;top:490.00px;font-size:14.52px;letter-spacing:0.000px;">Node</div>
<div class="a" style="left:965px;top:513px;width:295px;height:96px;background:#2a2e33"></div>
<svg class="ic" style="left:967.0px;top:518.0px;width:12px;height:12px" viewBox="0 0 16 16"><path d="M6 4l4 4-4 4" fill="none" stroke="#9a9da1" stroke-width="2.400" stroke-linecap="round" stroke-linejoin="round"/></svg>
<div class="t b" style="left:981.5px;top:514.00px;font-size:13.90px;letter-spacing:-0.299px;">Process</div>
<svg class="ic" style="left:967.0px;top:542.0px;width:12px;height:12px" viewBox="0 0 16 16"><path d="M6 4l4 4-4 4" fill="none" stroke="#9a9da1" stroke-width="2.400" stroke-linecap="round" stroke-linejoin="round"/></svg>
<div class="t b" style="left:981.5px;top:538.00px;font-size:14.64px;letter-spacing:0.000px;">Physics Interpolation</div>
<svg class="ic" style="left:967.0px;top:566.0px;width:12px;height:12px" viewBox="0 0 16 16"><path d="M6 4l4 4-4 4" fill="none" stroke="#9a9da1" stroke-width="2.400" stroke-linecap="round" stroke-linejoin="round"/></svg>
<div class="t b" style="left:981.5px;top:562.00px;font-size:14.64px;letter-spacing:0.000px;">Auto Translate</div>
<svg class="ic" style="left:967.0px;top:590.0px;width:12px;height:12px" viewBox="0 0 16 16"><path d="M6 4l4 4-4 4" fill="none" stroke="#9a9da1" stroke-width="2.400" stroke-linecap="round" stroke-linejoin="round"/></svg>
<div class="t b" style="left:981.5px;top:586.00px;font-size:14.43px;letter-spacing:0.000px;">Editor Description</div>
<div class="t " style="left:973px;top:613.00px;font-size:14.59px;letter-spacing:0.000px;">Script</div>
<div class="t " style="left:1144.5px;top:614.00px;font-size:14.60px;letter-spacing:0.000px;">&lt;empty&gt;</div>
<div class="a" style="left:1234px;top:610px;width:26px;height:29px;background:#2a2e33;border-radius:3px"></div>
<svg class="ic" style="left:1241.0px;top:619.0px;width:12px;height:12px" viewBox="0 0 16 16"><path d="M4 6l4 4 4-4" fill="none" stroke="#c0c2c4" stroke-width="2.400" stroke-linecap="round" stroke-linejoin="round"/></svg>
<div class="a" style="left:1023px;top:643px;width:179px;height:30px;background:#34383d;border-radius:3px"></div>
<svg class="ic" style="left:1029.5px;top:650.0px;width:16px;height:16px" viewBox="0 0 16 16"><path d="M7 1v6H1v2h6v6h2V9h6V7H9V1z" fill="#e0e0e0"/></svg>
<div class="t " style="left:1077.5px;top:648.00px;font-size:14.70px;letter-spacing:0.000px;">Add Metadata</div>
</body></html>
